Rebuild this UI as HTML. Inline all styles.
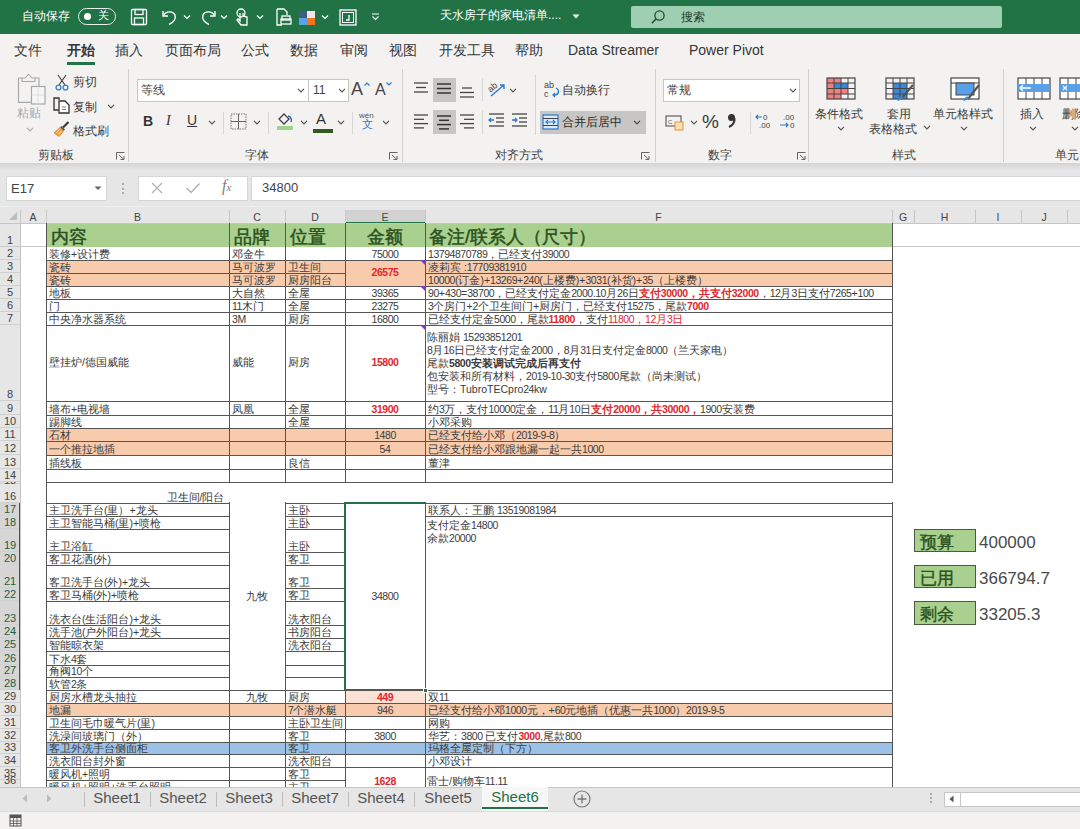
<!DOCTYPE html><html><head><meta charset="utf-8"><style>
*{box-sizing:border-box}
html,body{margin:0;padding:0;width:1080px;height:829px;overflow:hidden;background:#fff;font-family:"Liberation Sans",sans-serif;}
div{position:absolute}
.t{display:flex;white-space:nowrap;overflow:visible;line-height:1}
.s{position:absolute;white-space:nowrap;line-height:1}
svg{position:absolute;overflow:visible}
</style></head><body>
<div style="position:absolute;left:0px;top:0px;width:1080px;height:34px;background:#217346;"></div>
<div class="s" style="left:22px;top:10px;font-size:12px;color:#fff;font-weight:normal;">自动保存</div>
<div style="left:78px;top:8px;width:38px;height:17px;border:1.3px solid #e8f1ec;border-radius:9px"></div>
<div style="left:84px;top:13px;width:7px;height:7px;border-radius:50%;background:#fff"></div>
<div class="s" style="left:98px;top:10px;font-size:11px;color:#fff;font-weight:normal;">关</div>
<svg style="left:130px;top:8px" width="18" height="18" viewBox="0 0 18 18"><rect x="1.5" y="1.5" width="15" height="15" rx="1" fill="none" stroke="#fff" stroke-width="1.3"/><rect x="5" y="1.5" width="8" height="5" fill="none" stroke="#fff" stroke-width="1.3"/><rect x="4.5" y="10" width="9" height="6.5" fill="none" stroke="#fff" stroke-width="1.3"/></svg>
<svg style="left:160px;top:8px" width="20" height="18" viewBox="0 0 20 18"><path d="M3 3 L3 8 L8 8" fill="none" stroke="#fff" stroke-width="1.4"/><path d="M3.5 7.5 C6 3 13 2.5 15 7 C16.5 11 13 15 9 16.5" fill="none" stroke="#fff" stroke-width="1.4"/></svg>
<svg style="left:183px;top:14px" width="8" height="6" viewBox="0 0 8 6"><path d="M1 1.5 L4 4.5 L7 1.5" fill="none" stroke="#fff" stroke-width="1.2"/></svg>
<svg style="left:198px;top:8px" width="20" height="18" viewBox="0 0 20 18"><path d="M17 3 L17 8 L12 8" fill="none" stroke="#fff" stroke-width="1.4"/><path d="M16.5 7.5 C14 3 7 2.5 5 7 C3.5 11 7 15 11 16.5" fill="none" stroke="#fff" stroke-width="1.4"/></svg>
<svg style="left:220px;top:14px" width="8" height="6" viewBox="0 0 8 6"><path d="M1 1.5 L4 4.5 L7 1.5" fill="none" stroke="#fff" stroke-width="1.2"/></svg>
<svg style="left:234px;top:7px" width="16" height="20" viewBox="0 0 16 20"><circle cx="7" cy="6" r="4" fill="none" stroke="#fff" stroke-width="1.3"/><path d="M6 6 L6 14 L4 12 L3 13 L7 18 L13 18 L13 10 L9 9 L9 6" fill="none" stroke="#fff" stroke-width="1.3"/></svg>
<svg style="left:256px;top:14px" width="8" height="6" viewBox="0 0 8 6"><path d="M1 1.5 L4 4.5 L7 1.5" fill="none" stroke="#fff" stroke-width="1.2"/></svg>
<svg style="left:275px;top:7px" width="18" height="20" viewBox="0 0 18 20"><path d="M2 2 L9 2 L12 5 L12 8 M2 2 L2 18 L7 18" fill="none" stroke="#fff" stroke-width="1.3"/><rect x="7" y="9" width="8" height="4" fill="none" stroke="#fff" stroke-width="1.3"/><rect x="6" y="12" width="10" height="5" fill="none" stroke="#fff" stroke-width="1.3"/></svg>
<div style="left:299px;top:11px;width:8px;height:7px;background:#3f5d82"></div>
<div style="left:307px;top:11px;width:8px;height:7px;background:#f2e6ec"></div>
<div style="left:299px;top:18px;width:8px;height:7px;background:#5ba3e8"></div>
<div style="left:307px;top:18px;width:8px;height:7px;background:#f2761e"></div>
<svg style="left:321px;top:14px" width="8" height="6" viewBox="0 0 8 6"><path d="M1 1.5 L4 4.5 L7 1.5" fill="none" stroke="#fff" stroke-width="1.2"/></svg>
<svg style="left:339px;top:9px" width="18" height="17" viewBox="0 0 18 17"><rect x="1" y="1" width="16" height="15" fill="none" stroke="#fff" stroke-width="1.3"/><rect x="3.5" y="3.5" width="11" height="10" fill="none" stroke="#fff" stroke-width="1"/><path d="M10 6 L10 11 L7 11" fill="none" stroke="#fff" stroke-width="1.3"/></svg>
<svg style="left:371px;top:13px" width="9" height="8" viewBox="0 0 9 8"><path d="M1 1 L8 1 M1.5 3.5 L4.5 6.5 L7.5 3.5" fill="none" stroke="#fff" stroke-width="1.1"/></svg>
<div class="s" style="left:440px;top:9px;font-size:12px;color:#fff;font-weight:normal;">天水房子的家电清单....</div>
<svg style="left:572px;top:14px" width="8" height="5" viewBox="0 0 8 5"><path d="M0.5 0.5 L4 4.5 L7.5 0.5Z" fill="#fff"/></svg>
<div style="position:absolute;left:631px;top:6px;width:371px;height:22px;background:#9fcfb3;border-radius:2px"></div>
<svg style="left:650px;top:9px" width="16" height="16" viewBox="0 0 16 16"><circle cx="9.5" cy="6.5" r="4.6" fill="none" stroke="#1e4a30" stroke-width="1.3"/><path d="M6.3 9.7 L1.8 14.2" stroke="#1e4a30" stroke-width="1.5"/></svg>
<div class="s" style="left:681px;top:11px;font-size:12px;color:#1d3b2a;font-weight:normal;">搜索</div>
<div style="position:absolute;left:0px;top:34px;width:1080px;height:131px;background:#f3f2f1;"></div>
<div class="s" style="left:14px;top:43px;font-size:14px;color:#363636;font-weight:normal;">文件</div>
<div class="s" style="left:67px;top:43px;font-size:14px;color:#363636;font-weight:bold;">开始</div>
<div class="s" style="left:115px;top:43px;font-size:14px;color:#363636;font-weight:normal;">插入</div>
<div class="s" style="left:165px;top:43px;font-size:14px;color:#363636;font-weight:normal;">页面布局</div>
<div class="s" style="left:241px;top:43px;font-size:14px;color:#363636;font-weight:normal;">公式</div>
<div class="s" style="left:290px;top:43px;font-size:14px;color:#363636;font-weight:normal;">数据</div>
<div class="s" style="left:340px;top:43px;font-size:14px;color:#363636;font-weight:normal;">审阅</div>
<div class="s" style="left:389px;top:43px;font-size:14px;color:#363636;font-weight:normal;">视图</div>
<div class="s" style="left:439px;top:43px;font-size:14px;color:#363636;font-weight:normal;">开发工具</div>
<div class="s" style="left:515px;top:43px;font-size:14px;color:#363636;font-weight:normal;">帮助</div>
<div class="s" style="left:568px;top:43px;font-size:14px;color:#363636;font-weight:normal;">Data Streamer</div>
<div class="s" style="left:689px;top:43px;font-size:14px;color:#363636;font-weight:normal;">Power Pivot</div>
<div style="position:absolute;left:67px;top:62px;width:28px;height:3px;background:#217346;"></div>
<div style="position:absolute;left:128px;top:69px;width:1px;height:93px;background:#d2d0ce;"></div>
<div style="position:absolute;left:402px;top:69px;width:1px;height:93px;background:#d2d0ce;"></div>
<div style="position:absolute;left:655px;top:69px;width:1px;height:93px;background:#d2d0ce;"></div>
<div style="position:absolute;left:808px;top:69px;width:1px;height:93px;background:#d2d0ce;"></div>
<div style="position:absolute;left:1003px;top:69px;width:1px;height:93px;background:#d2d0ce;"></div>
<div class="s" style="left:38px;top:149px;font-size:12px;color:#444;font-weight:normal;">剪贴板</div>
<div class="s" style="left:245px;top:149px;font-size:12px;color:#444;font-weight:normal;">字体</div>
<div class="s" style="left:495px;top:149px;font-size:12px;color:#444;font-weight:normal;">对齐方式</div>
<div class="s" style="left:708px;top:149px;font-size:12px;color:#444;font-weight:normal;">数字</div>
<div class="s" style="left:892px;top:149px;font-size:12px;color:#444;font-weight:normal;">样式</div>
<div class="s" style="left:1055px;top:149px;font-size:12px;color:#444;font-weight:normal;">单元</div>
<svg style="left:116px;top:152px" width="9" height="8" viewBox="0 0 9 8"><path d="M0.5 7.5 L0.5 0.5 L8.5 0.5" fill="none" stroke="#666" stroke-width="1"/><path d="M3 3 L8 7.5 M8 4 L8 7.5 L4.5 7.5" fill="none" stroke="#666" stroke-width="1"/></svg>
<svg style="left:389px;top:152px" width="9" height="8" viewBox="0 0 9 8"><path d="M0.5 7.5 L0.5 0.5 L8.5 0.5" fill="none" stroke="#666" stroke-width="1"/><path d="M3 3 L8 7.5 M8 4 L8 7.5 L4.5 7.5" fill="none" stroke="#666" stroke-width="1"/></svg>
<svg style="left:641px;top:152px" width="9" height="8" viewBox="0 0 9 8"><path d="M0.5 7.5 L0.5 0.5 L8.5 0.5" fill="none" stroke="#666" stroke-width="1"/><path d="M3 3 L8 7.5 M8 4 L8 7.5 L4.5 7.5" fill="none" stroke="#666" stroke-width="1"/></svg>
<svg style="left:797px;top:152px" width="9" height="8" viewBox="0 0 9 8"><path d="M0.5 7.5 L0.5 0.5 L8.5 0.5" fill="none" stroke="#666" stroke-width="1"/><path d="M3 3 L8 7.5 M8 4 L8 7.5 L4.5 7.5" fill="none" stroke="#666" stroke-width="1"/></svg>
<svg style="left:17px;top:73px" width="30" height="33" viewBox="0 0 30 33"><path d="M14 29.3 L1.5 29.3 L1.5 5 L5 5 M18 5 L22 5 L22 13" fill="none" stroke="#a8a8a8" stroke-width="1.2"/><path d="M5 5 L5 8.5 L18 8.5 L18 5 L15 5 L11.5 1.2 L8 5 Z" fill="#f3f2f1" stroke="#a8a8a8" stroke-width="1.1"/><rect x="14.5" y="13.5" width="13.5" height="17.5" fill="#f6f6f6" stroke="#a8a8a8" stroke-width="1.2"/><path d="M21 13.5 L21 31 M14.5 22 L28 22" stroke="#d4d4d4" stroke-width="0.7"/></svg>
<div class="s" style="left:17px;top:107px;font-size:12px;color:#a8a8a8;font-weight:normal;">粘贴</div>
<svg style="left:26px;top:127px" width="8" height="5" viewBox="0 0 8 5"><path d="M1 0.8 L4 3.8 L7 0.8" fill="none" stroke="#aaa" stroke-width="1.2"/></svg>
<svg style="left:55px;top:74px" width="14" height="17" viewBox="0 0 14 17"><path d="M3 1 L10 11 M11 1 L4 11" stroke="#444" stroke-width="1.2"/><circle cx="3.5" cy="13.5" r="2.4" fill="none" stroke="#3a86c8" stroke-width="1.4"/><circle cx="10.5" cy="13.5" r="2.4" fill="none" stroke="#3a86c8" stroke-width="1.4"/></svg>
<div class="s" style="left:73px;top:76px;font-size:12px;color:#3a3a3a;font-weight:normal;">剪切</div>
<svg style="left:53px;top:97px" width="17" height="17" viewBox="0 0 17 17"><path d="M6 3 L6 1 L1 1 L1 13 L6 13" fill="none" stroke="#333" stroke-width="1.3"/><path d="M6 4 L12 4 L16 8 L16 16 L6 16 Z" fill="#fff" stroke="#333" stroke-width="1.3"/><path d="M9 10 L13 10 M9 12.5 L13 12.5" stroke="#777" stroke-width="0.9"/></svg>
<div class="s" style="left:73px;top:101px;font-size:12px;color:#3a3a3a;font-weight:normal;">复制</div>
<svg style="left:107px;top:104px" width="8" height="5" viewBox="0 0 8 5"><path d="M1 0.8 L4 3.8 L7 0.8" fill="none" stroke="#555" stroke-width="1.2"/></svg>
<svg style="left:53px;top:121px" width="17" height="17" viewBox="0 0 17 17"><path d="M15.5 1 L10 6.5" stroke="#3a3a3a" stroke-width="2.2"/><path d="M8.5 5 L12 8.5 L10.5 10 L7 6.5 Z" fill="#555" /><path d="M7 6.5 L10.5 10 L6 15.5 L1 12 Z" fill="#f2a23c" stroke="#d9822b" stroke-width="0.8"/><path d="M3.5 11.5 L6.5 8.5 M5.5 13 L8.5 10" stroke="#fde3c0" stroke-width="0.8"/></svg>
<div class="s" style="left:73px;top:125px;font-size:12px;color:#3a3a3a;font-weight:normal;">格式刷</div>
<div style="position:absolute;left:137px;top:79px;width:172px;height:23px;background:#fff;border:1px solid #c8c6c4"></div>
<div class="s" style="left:141px;top:84px;font-size:12px;color:#444;font-weight:normal;">等线</div>
<svg style="left:297px;top:88px" width="8" height="5" viewBox="0 0 8 5"><path d="M1 0.8 L4 3.8 L7 0.8" fill="none" stroke="#555" stroke-width="1.2"/></svg>
<div style="position:absolute;left:308px;top:79px;width:41px;height:23px;background:#fff;border:1px solid #c8c6c4"></div>
<div class="s" style="left:313px;top:84px;font-size:12px;color:#444;font-weight:normal;">11</div>
<svg style="left:338px;top:88px" width="8" height="5" viewBox="0 0 8 5"><path d="M1 0.8 L4 3.8 L7 0.8" fill="none" stroke="#555" stroke-width="1.2"/></svg>
<div class="s" style="left:351px;top:80px;font-size:18px;color:#444;font-weight:normal;">A</div>
<svg style="left:364px;top:82px" width="6" height="4" viewBox="0 0 6 4"><path d="M0.5 3.5 L3 1 L5.5 3.5" fill="none" stroke="#2b79d0" stroke-width="1.2"/></svg>
<div class="s" style="left:375px;top:82px;font-size:16px;color:#444;font-weight:normal;">A</div>
<svg style="left:386px;top:82px" width="6" height="4" viewBox="0 0 6 4"><path d="M0.5 0.5 L3 3 L5.5 0.5" fill="none" stroke="#2b79d0" stroke-width="1.2"/></svg>
<div class="s" style="left:143px;top:114px;font-size:14px;color:#333;font-weight:bold;">B</div>
<div class="s" style="left:166px;top:114px;font-size:14px;color:#333;font-weight:normal;font-style:italic;font-family:'Liberation Serif',serif">I</div>
<div class="s" style="left:187px;top:113px;font-size:14px;color:#333;text-decoration:underline">U</div>
<svg style="left:208px;top:120px" width="8" height="5" viewBox="0 0 8 5"><path d="M1 0.8 L4 3.8 L7 0.8" fill="none" stroke="#555" stroke-width="1.2"/></svg>
<div style="position:absolute;left:223px;top:112px;width:1px;height:22px;background:#d8d6d4;"></div>
<svg style="left:230px;top:113px" width="17" height="17" viewBox="0 0 17 17"><rect x="1" y="1" width="15" height="15" fill="none" stroke="#777" stroke-width="1" stroke-dasharray="1.5 1"/><path d="M8.5 1 L8.5 16 M1 8.5 L16 8.5" stroke="#666" stroke-width="1"/></svg>
<svg style="left:253px;top:120px" width="8" height="5" viewBox="0 0 8 5"><path d="M1 0.8 L4 3.8 L7 0.8" fill="none" stroke="#555" stroke-width="1.2"/></svg>
<div style="position:absolute;left:268px;top:112px;width:1px;height:22px;background:#d8d6d4;"></div>
<svg style="left:276px;top:111px" width="18" height="20" viewBox="0 0 18 20"><path d="M3 8 L8 3 L13 8 L8 13 Z" fill="none" stroke="#444" stroke-width="1.3"/><path d="M12 5 C15 5 16 9 15 11" fill="none" stroke="#2b6cb0" stroke-width="1.5"/><rect x="1" y="15" width="16" height="4" fill="#9fd58a"/></svg>
<svg style="left:300px;top:120px" width="8" height="5" viewBox="0 0 8 5"><path d="M1 0.8 L4 3.8 L7 0.8" fill="none" stroke="#555" stroke-width="1.2"/></svg>
<div class="s" style="left:316px;top:111px;font-size:15px;color:#333;font-weight:normal;">A</div>
<div style="position:absolute;left:313px;top:129px;width:20px;height:4px;background:#2f5a22;"></div>
<svg style="left:337px;top:120px" width="8" height="5" viewBox="0 0 8 5"><path d="M1 0.8 L4 3.8 L7 0.8" fill="none" stroke="#555" stroke-width="1.2"/></svg>
<div style="position:absolute;left:352px;top:112px;width:1px;height:22px;background:#d8d6d4;"></div>
<div class="s" style="left:359px;top:112px;font-size:8px;color:#555;font-weight:normal;">wén</div>
<div class="s" style="left:362px;top:119px;font-size:11px;color:#2b79d0;font-weight:normal;">文</div>
<svg style="left:382px;top:120px" width="8" height="5" viewBox="0 0 8 5"><path d="M1 0.8 L4 3.8 L7 0.8" fill="none" stroke="#555" stroke-width="1.2"/></svg>
<div style="position:absolute;left:433px;top:78px;width:23px;height:24px;background:#c8c6c4;"></div>
<div style="position:absolute;left:433px;top:110px;width:23px;height:24px;background:#c8c6c4;"></div>
<svg style="left:413px;top:81px" width="16" height="14" viewBox="0 0 16 14"><path d="M1 2.0 L15 2.0" stroke="#444" stroke-width="1.3"/><path d="M3 6.5 L13 6.5" stroke="#444" stroke-width="1.3"/><path d="M1 11.0 L15 11.0" stroke="#444" stroke-width="1.3"/></svg>
<svg style="left:436px;top:82px" width="16" height="14" viewBox="0 0 16 14"><path d="M1 2.0 L15 2.0" stroke="#333" stroke-width="1.5"/><path d="M1 6.5 L15 6.5" stroke="#333" stroke-width="1.5"/><path d="M1 11.0 L15 11.0" stroke="#333" stroke-width="1.5"/></svg>
<svg style="left:459px;top:86px" width="16" height="14" viewBox="0 0 16 14"><path d="M3 2.0 L13 2.0" stroke="#444" stroke-width="1.3"/><path d="M1 6.5 L15 6.5" stroke="#444" stroke-width="1.3"/><path d="M1 11.0 L15 11.0" stroke="#444" stroke-width="1.3"/></svg>
<div style="position:absolute;left:482px;top:78px;width:1px;height:23px;background:#d8d6d4;"></div>
<svg style="left:487px;top:80px" width="20" height="18" viewBox="0 0 20 18"><text x="1" y="10" font-size="9" fill="#444" transform="rotate(-40 6 8)" font-family="Liberation Sans">ab</text><path d="M4 16 L17 5 M13 5 L17 5 L17 9" fill="none" stroke="#2b79d0" stroke-width="1.4"/></svg>
<svg style="left:509px;top:88px" width="8" height="5" viewBox="0 0 8 5"><path d="M1 0.8 L4 3.8 L7 0.8" fill="none" stroke="#555" stroke-width="1.2"/></svg>
<div style="position:absolute;left:535px;top:75px;width:1px;height:60px;background:#d8d6d4;"></div>
<svg style="left:543px;top:80px" width="17" height="18" viewBox="0 0 17 18"><text x="1" y="8" font-size="9" fill="#444" font-family="Liberation Sans">ab</text><text x="1" y="17" font-size="9" fill="#444" font-family="Liberation Sans">c</text><path d="M13 8 C17 10 16 15 11 15 M12 13 L10 15 L12 17" fill="none" stroke="#2b79d0" stroke-width="1.3"/></svg>
<div class="s" style="left:562px;top:84px;font-size:12px;color:#3a3a3a;font-weight:normal;">自动换行</div>
<svg style="left:413px;top:113px" width="16" height="16" viewBox="0 0 16 16"><path d="M1 2.0 L15 2.0" stroke="#444" stroke-width="1.3"/><path d="M1 6.3 L11 6.3" stroke="#444" stroke-width="1.3"/><path d="M1 10.6 L15 10.6" stroke="#444" stroke-width="1.3"/><path d="M1 14.899999999999999 L11 14.899999999999999" stroke="#444" stroke-width="1.3"/></svg>
<svg style="left:436px;top:114px" width="16" height="16" viewBox="0 0 16 16"><path d="M1 2.0 L15 2.0" stroke="#333" stroke-width="1.5"/><path d="M3 6.3 L13 6.3" stroke="#333" stroke-width="1.5"/><path d="M1 10.6 L15 10.6" stroke="#333" stroke-width="1.5"/><path d="M3 14.899999999999999 L13 14.899999999999999" stroke="#333" stroke-width="1.5"/></svg>
<svg style="left:459px;top:113px" width="16" height="16" viewBox="0 0 16 16"><path d="M1 2.0 L15 2.0" stroke="#444" stroke-width="1.3"/><path d="M5 6.3 L15 6.3" stroke="#444" stroke-width="1.3"/><path d="M1 10.6 L15 10.6" stroke="#444" stroke-width="1.3"/><path d="M5 14.899999999999999 L15 14.899999999999999" stroke="#444" stroke-width="1.3"/></svg>
<div style="position:absolute;left:482px;top:110px;width:1px;height:24px;background:#d8d6d4;"></div>
<svg style="left:488px;top:112px" width="17" height="16" viewBox="0 0 17 16"><path d="M1 2 L16 2" stroke="#444" stroke-width="1.3"/><path d="M8 6 L16 6" stroke="#444" stroke-width="1.3"/><path d="M8 10 L16 10" stroke="#444" stroke-width="1.3"/><path d="M1 14 L16 14" stroke="#444" stroke-width="1.3"/><path d="M1 8 L6 8 M3 6 L1 8 L3 10" fill="none" stroke="#2b79d0" stroke-width="1.3"/></svg>
<svg style="left:511px;top:112px" width="17" height="16" viewBox="0 0 17 16"><path d="M1 2 L16 2" stroke="#444" stroke-width="1.3"/><path d="M8 6 L16 6" stroke="#444" stroke-width="1.3"/><path d="M8 10 L16 10" stroke="#444" stroke-width="1.3"/><path d="M1 14 L16 14" stroke="#444" stroke-width="1.3"/><path d="M1 8 L6 8 M4 6 L6 8 L4 10" fill="none" stroke="#2b79d0" stroke-width="1.3"/></svg>
<div style="position:absolute;left:540px;top:111px;width:106px;height:23px;background:#c8c6c4;"></div>
<svg style="left:542px;top:114px" width="17" height="16" viewBox="0 0 17 16"><rect x="1" y="1" width="15" height="14" fill="#dbeaf7" stroke="#2b79d0" stroke-width="1.2"/><path d="M1 4.5 L16 4.5 M1 11.5 L16 11.5" stroke="#444" stroke-width="1"/><path d="M4 8 L13 8 M6 6 L4 8 L6 10 M11 6 L13 8 L11 10" fill="none" stroke="#2b79d0" stroke-width="1.1"/></svg>
<div class="s" style="left:562px;top:116px;font-size:12px;color:#2a2a2a;font-weight:normal;">合并后居中</div>
<svg style="left:633px;top:120px" width="8" height="5" viewBox="0 0 8 5"><path d="M1 0.8 L4 3.8 L7 0.8" fill="none" stroke="#444" stroke-width="1.2"/></svg>
<div style="position:absolute;left:663px;top:79px;width:137px;height:23px;background:#fff;border:1px solid #c8c6c4"></div>
<div class="s" style="left:667px;top:84px;font-size:12px;color:#444;font-weight:normal;">常规</div>
<svg style="left:789px;top:88px" width="8" height="5" viewBox="0 0 8 5"><path d="M1 0.8 L4 3.8 L7 0.8" fill="none" stroke="#555" stroke-width="1.2"/></svg>
<svg style="left:665px;top:114px" width="20" height="17" viewBox="0 0 20 17"><rect x="1" y="2" width="15" height="10" fill="none" stroke="#555" stroke-width="1.1"/><text x="3" y="10" font-size="6" fill="#555" font-family="Liberation Sans">C</text><rect x="10" y="8" width="8" height="8" fill="#fbe0b8" stroke="#e8912b" stroke-width="1"/></svg>
<svg style="left:690px;top:120px" width="8" height="5" viewBox="0 0 8 5"><path d="M1 0.8 L4 3.8 L7 0.8" fill="none" stroke="#555" stroke-width="1.2"/></svg>
<div class="s" style="left:702px;top:112px;font-size:19px;color:#3a3a3a;font-weight:normal;">%</div>
<div class="s" style="left:727px;top:109px;font-size:0px;color:#333;font-weight:normal;">❟</div>
<svg style="left:727px;top:113px" width="9" height="15" viewBox="0 0 9 15"><circle cx="4.5" cy="4.5" r="3.5" fill="#333"/><path d="M7.5 5 C8 9 6 12 2 14" fill="none" stroke="#333" stroke-width="2"/></svg>
<div style="position:absolute;left:750px;top:112px;width:1px;height:22px;background:#d8d6d4;"></div>
<svg style="left:755px;top:113px" width="18" height="17" viewBox="0 0 18 17"><text x="8" y="7" font-size="8" fill="#444" font-family="Liberation Sans">0</text><text x="4" y="15" font-size="8" fill="#444" font-family="Liberation Sans">.00</text><path d="M1 4 L7 4 M3 2 L1 4 L3 6" fill="none" stroke="#2b79d0" stroke-width="1.2"/></svg>
<svg style="left:779px;top:113px" width="18" height="17" viewBox="0 0 18 17"><text x="4" y="7" font-size="8" fill="#444" font-family="Liberation Sans">.00</text><text x="11" y="15" font-size="8" fill="#444" font-family="Liberation Sans">0</text><path d="M1 12 L9 12 M7 10 L9 12 L7 14" fill="none" stroke="#2b79d0" stroke-width="1.2"/></svg>
<svg style="left:826px;top:77px" width="30" height="24" viewBox="0 0 30 24"><rect x="1" y="1" width="14" height="5" fill="#f08080"/><rect x="1" y="6" width="7" height="5.5" fill="#f08080"/><rect x="8" y="6" width="14" height="5.5" fill="#3a86d8"/><rect x="1" y="11.5" width="21" height="5.5" fill="#f08080"/><rect x="1" y="17" width="14" height="5" fill="#f08080"/><rect x="1" y="1" width="28" height="21" fill="none" stroke="#444" stroke-width="1.2"/><path d="M8 1 L8 22" stroke="#444" stroke-width="1"/><path d="M15 1 L15 22" stroke="#444" stroke-width="1"/><path d="M22 1 L22 22" stroke="#444" stroke-width="1"/><path d="M1 6 L29 6" stroke="#444" stroke-width="1"/><path d="M1 11.5 L29 11.5" stroke="#444" stroke-width="1"/><path d="M1 17 L29 17" stroke="#444" stroke-width="1"/></svg>
<svg style="left:885px;top:77px" width="30" height="24" viewBox="0 0 30 24"><rect x="8" y="6" width="14" height="16" fill="#3a86d8"/><rect x="1" y="1" width="28" height="21" fill="none" stroke="#444" stroke-width="1.2"/><path d="M8 1 L8 22" stroke="#444" stroke-width="1"/><path d="M15 1 L15 22" stroke="#444" stroke-width="1"/><path d="M22 1 L22 22" stroke="#444" stroke-width="1"/><path d="M1 6 L29 6" stroke="#444" stroke-width="1"/><path d="M1 11.5 L29 11.5" stroke="#444" stroke-width="1"/><path d="M1 17 L29 17" stroke="#444" stroke-width="1"/><path d="M16 22 L28 8" stroke="#555" stroke-width="2.2"/><path d="M13 24 C14 20 16 19 18 21" fill="#3a86d8" stroke="#3a86d8"/></svg>
<svg style="left:950px;top:77px" width="30" height="24" viewBox="0 0 30 24"><rect x="1" y="1" width="28" height="21" fill="#fff" stroke="#444" stroke-width="1.2"/><path d="M1 6 L29 6" stroke="#444"/><rect x="6" y="6" width="18" height="12" fill="#5aa0e8" stroke="#444" stroke-width="1"/><path d="M18 22 L29 8" stroke="#555" stroke-width="2.2"/><path d="M14 24 C15 20 17 19 19 21" fill="#3a86d8" stroke="#3a86d8"/></svg>
<div class="s" style="left:815px;top:108px;font-size:12px;color:#3a3a3a;font-weight:normal;">条件格式</div>
<svg style="left:837px;top:126px" width="8" height="5" viewBox="0 0 8 5"><path d="M1 0.8 L4 3.8 L7 0.8" fill="none" stroke="#555" stroke-width="1.2"/></svg>
<div class="s" style="left:887px;top:108px;font-size:12px;color:#3a3a3a;font-weight:normal;">套用</div>
<div class="s" style="left:869px;top:123px;font-size:12px;color:#3a3a3a;font-weight:normal;">表格格式</div>
<svg style="left:923px;top:125px" width="8" height="5" viewBox="0 0 8 5"><path d="M1 0.8 L4 3.8 L7 0.8" fill="none" stroke="#555" stroke-width="1.2"/></svg>
<div class="s" style="left:933px;top:108px;font-size:12px;color:#3a3a3a;font-weight:normal;">单元格样式</div>
<svg style="left:960px;top:126px" width="8" height="5" viewBox="0 0 8 5"><path d="M1 0.8 L4 3.8 L7 0.8" fill="none" stroke="#555" stroke-width="1.2"/></svg>
<svg style="left:1017px;top:77px" width="34" height="24" viewBox="0 0 34 24"><rect x="1" y="1" width="32" height="21" fill="#fff" stroke="#444" stroke-width="1.2"/><path d="M9 1 L9 22 M17 1 L17 22 M25 1 L25 22" stroke="#444"/><rect x="1" y="7" width="32" height="8" fill="#5aa0e8"/><path d="M3 11 L14 11 M6 8 L3 11 L6 14" fill="none" stroke="#fff" stroke-width="1.3"/></svg>
<svg style="left:1059px;top:77px" width="34" height="24" viewBox="0 0 34 24"><rect x="1" y="1" width="32" height="21" fill="#fff" stroke="#444" stroke-width="1.2"/><path d="M9 1 L9 22 M17 1 L17 22" stroke="#444"/><rect x="1" y="7" width="32" height="8" fill="#5aa0e8"/><path d="M4 9 L8 13 M8 9 L4 13" stroke="#fff" stroke-width="1.2"/></svg>
<div class="s" style="left:1020px;top:108px;font-size:12px;color:#3a3a3a;font-weight:normal;">插入</div>
<svg style="left:1029px;top:126px" width="8" height="5" viewBox="0 0 8 5"><path d="M1 0.8 L4 3.8 L7 0.8" fill="none" stroke="#555" stroke-width="1.2"/></svg>
<div class="s" style="left:1062px;top:108px;font-size:12px;color:#3a3a3a;font-weight:normal;">删除</div>
<svg style="left:1071px;top:126px" width="8" height="5" viewBox="0 0 8 5"><path d="M1 0.8 L4 3.8 L7 0.8" fill="none" stroke="#555" stroke-width="1.2"/></svg>
<div style="position:absolute;left:0px;top:164px;width:1080px;height:46px;background:#e6e6e6;"></div>
<div style="position:absolute;left:0px;top:163px;width:1080px;height:7px;background:linear-gradient(#d4d4d4,#e6e6e6);"></div>
<div style="position:absolute;left:0px;top:206px;width:1080px;height:1px;background:#f0f0f0;"></div>
<div style="position:absolute;left:6px;top:176px;width:101px;height:25px;background:#fff;border:1px solid #d6d6d6"></div>
<div class="s" style="left:11px;top:182px;font-size:13px;color:#444;font-weight:normal;">E17</div>
<svg style="left:94px;top:186px" width="8" height="5" viewBox="0 0 8 5"><path d="M0.5 0.5 L4 4 L7.5 0.5Z" fill="#666"/></svg>
<div style="left:121.5px;top:183px;width:2px;height:2px;background:#999;border-radius:1px"></div>
<div style="left:121.5px;top:187.5px;width:2px;height:2px;background:#999;border-radius:1px"></div>
<div style="left:121.5px;top:192px;width:2px;height:2px;background:#999;border-radius:1px"></div>
<div style="position:absolute;left:138px;top:176px;width:110px;height:25px;background:#fff;border:1px solid #d6d6d6"></div>
<svg style="left:150px;top:181px" width="14" height="14" viewBox="0 0 14 14"><path d="M2 2 L12 12 M12 2 L2 12" stroke="#b0b0b0" stroke-width="1.2"/></svg>
<svg style="left:185px;top:181px" width="16" height="14" viewBox="0 0 16 14"><path d="M1.5 7 L6 11.5 L14.5 2.5" fill="none" stroke="#b0b0b0" stroke-width="1.3"/></svg>
<div class="s" style="left:222px;top:178px;font-size:16px;color:#808080;font-weight:normal;font-family:'Liberation Serif',serif"><i>f</i><span style="font-size:11px"><i>x</i></span></div>
<div style="position:absolute;left:251px;top:176px;width:829px;height:25px;background:#fff;border:1px solid #d6d6d6;border-right:none"></div>
<div class="s" style="left:262px;top:181px;font-size:13px;color:#444;font-weight:normal;">34800</div>
<div style="position:absolute;left:0px;top:210px;width:1080px;height:14px;background:#e6e6e6;"></div>
<svg style="left:8px;top:211px" width="10" height="10" viewBox="0 0 10 10"><path d="M9 1 L9 9 L1 9 Z" fill="#bdbdbd"/></svg>
<div style="position:absolute;left:345px;top:210px;width:80px;height:14px;background:#d2d2d2;"></div>
<div style="position:absolute;left:345px;top:222px;width:80px;height:1.5px;background:#217346;"></div>
<div style="position:absolute;left:20px;top:210px;width:1px;height:14px;background:#c6c6c6;"></div>
<div class="t" style="left:20px;top:209px;width:26px;height:13px;justify-content:center;align-items:flex-end;font-size:10.5px;color:#444;font-weight:normal;"><span>A</span></div>
<div style="position:absolute;left:46px;top:210px;width:1px;height:14px;background:#c6c6c6;"></div>
<div class="t" style="left:46px;top:209px;width:183px;height:13px;justify-content:center;align-items:flex-end;font-size:10.5px;color:#444;font-weight:normal;"><span>B</span></div>
<div style="position:absolute;left:229px;top:210px;width:1px;height:14px;background:#c6c6c6;"></div>
<div class="t" style="left:229px;top:209px;width:56px;height:13px;justify-content:center;align-items:flex-end;font-size:10.5px;color:#444;font-weight:normal;"><span>C</span></div>
<div style="position:absolute;left:285px;top:210px;width:1px;height:14px;background:#c6c6c6;"></div>
<div class="t" style="left:285px;top:209px;width:60px;height:13px;justify-content:center;align-items:flex-end;font-size:10.5px;color:#444;font-weight:normal;"><span>D</span></div>
<div style="position:absolute;left:345px;top:210px;width:1px;height:14px;background:#c6c6c6;"></div>
<div class="t" style="left:345px;top:209px;width:80px;height:13px;justify-content:center;align-items:flex-end;font-size:10.5px;color:#1e5e3a;font-weight:normal;"><span>E</span></div>
<div style="position:absolute;left:425px;top:210px;width:1px;height:14px;background:#c6c6c6;"></div>
<div class="t" style="left:425px;top:209px;width:467px;height:13px;justify-content:center;align-items:flex-end;font-size:10.5px;color:#444;font-weight:normal;"><span>F</span></div>
<div style="position:absolute;left:892px;top:210px;width:1px;height:14px;background:#c6c6c6;"></div>
<div class="t" style="left:892px;top:209px;width:22px;height:13px;justify-content:center;align-items:flex-end;font-size:10.5px;color:#444;font-weight:normal;"><span>G</span></div>
<div style="position:absolute;left:914px;top:210px;width:1px;height:14px;background:#c6c6c6;"></div>
<div class="t" style="left:914px;top:209px;width:61px;height:13px;justify-content:center;align-items:flex-end;font-size:10.5px;color:#444;font-weight:normal;"><span>H</span></div>
<div style="position:absolute;left:975px;top:210px;width:1px;height:14px;background:#c6c6c6;"></div>
<div class="t" style="left:975px;top:209px;width:46px;height:13px;justify-content:center;align-items:flex-end;font-size:10.5px;color:#444;font-weight:normal;"><span>I</span></div>
<div style="position:absolute;left:1021px;top:210px;width:1px;height:14px;background:#c6c6c6;"></div>
<div class="t" style="left:1021px;top:209px;width:46px;height:13px;justify-content:center;align-items:flex-end;font-size:10.5px;color:#444;font-weight:normal;"><span>J</span></div>
<div style="position:absolute;left:1067px;top:210px;width:1px;height:14px;background:#c6c6c6;"></div>
<div class="t" style="left:1067px;top:209px;width:46px;height:13px;justify-content:center;align-items:flex-end;font-size:10.5px;color:#444;font-weight:normal;"><span>K</span></div>
<div style="position:absolute;left:20px;top:210px;width:1px;height:14px;background:#c6c6c6;"></div>
<div style="position:absolute;left:0px;top:223px;width:1080px;height:1px;background:#c6c6c6;"></div>
<div style="position:absolute;left:0px;top:224px;width:20px;height:563px;background:#e6e6e6;"></div>
<div style="position:absolute;left:0px;top:503px;width:20px;height:187px;background:#d6d6d6;"></div>
<div style="position:absolute;left:0px;top:246px;width:20px;height:1px;background:#d0d0d0;"></div>
<div class="t" style="left:0px;top:224px;width:20px;height:22px;justify-content:center;align-items:flex-end;font-size:11px;color:#444;font-weight:normal;"><span>1</span></div>
<div style="position:absolute;left:0px;top:259px;width:20px;height:1px;background:#d0d0d0;"></div>
<div class="t" style="left:0px;top:247px;width:20px;height:12px;justify-content:center;align-items:flex-end;font-size:11px;color:#444;font-weight:normal;"><span>2</span></div>
<div style="position:absolute;left:0px;top:272px;width:20px;height:1px;background:#d0d0d0;"></div>
<div class="t" style="left:0px;top:260px;width:20px;height:12px;justify-content:center;align-items:flex-end;font-size:11px;color:#444;font-weight:normal;"><span>3</span></div>
<div style="position:absolute;left:0px;top:285px;width:20px;height:1px;background:#d0d0d0;"></div>
<div class="t" style="left:0px;top:273px;width:20px;height:12px;justify-content:center;align-items:flex-end;font-size:11px;color:#444;font-weight:normal;"><span>4</span></div>
<div style="position:absolute;left:0px;top:298px;width:20px;height:1px;background:#d0d0d0;"></div>
<div class="t" style="left:0px;top:286px;width:20px;height:12px;justify-content:center;align-items:flex-end;font-size:11px;color:#444;font-weight:normal;"><span>5</span></div>
<div style="position:absolute;left:0px;top:311px;width:20px;height:1px;background:#d0d0d0;"></div>
<div class="t" style="left:0px;top:299px;width:20px;height:12px;justify-content:center;align-items:flex-end;font-size:11px;color:#444;font-weight:normal;"><span>6</span></div>
<div style="position:absolute;left:0px;top:324px;width:20px;height:1px;background:#d0d0d0;"></div>
<div class="t" style="left:0px;top:312px;width:20px;height:12px;justify-content:center;align-items:flex-end;font-size:11px;color:#444;font-weight:normal;"><span>7</span></div>
<div style="position:absolute;left:0px;top:400px;width:20px;height:1px;background:#d0d0d0;"></div>
<div class="t" style="left:0px;top:325px;width:20px;height:75px;justify-content:center;align-items:flex-end;font-size:11px;color:#444;font-weight:normal;"><span>8</span></div>
<div style="position:absolute;left:0px;top:414px;width:20px;height:1px;background:#d0d0d0;"></div>
<div class="t" style="left:0px;top:401px;width:20px;height:13px;justify-content:center;align-items:flex-end;font-size:11px;color:#444;font-weight:normal;"><span>9</span></div>
<div style="position:absolute;left:0px;top:427px;width:20px;height:1px;background:#d0d0d0;"></div>
<div class="t" style="left:0px;top:415px;width:20px;height:12px;justify-content:center;align-items:flex-end;font-size:11px;color:#444;font-weight:normal;"><span>10</span></div>
<div style="position:absolute;left:0px;top:440px;width:20px;height:1px;background:#d0d0d0;"></div>
<div class="t" style="left:0px;top:428px;width:20px;height:12px;justify-content:center;align-items:flex-end;font-size:11px;color:#444;font-weight:normal;"><span>11</span></div>
<div style="position:absolute;left:0px;top:454px;width:20px;height:1px;background:#d0d0d0;"></div>
<div class="t" style="left:0px;top:441px;width:20px;height:13px;justify-content:center;align-items:flex-end;font-size:11px;color:#444;font-weight:normal;"><span>12</span></div>
<div style="position:absolute;left:0px;top:468px;width:20px;height:1px;background:#d0d0d0;"></div>
<div class="t" style="left:0px;top:455px;width:20px;height:13px;justify-content:center;align-items:flex-end;font-size:11px;color:#444;font-weight:normal;"><span>13</span></div>
<div style="position:absolute;left:0px;top:481px;width:20px;height:1px;background:#d0d0d0;"></div>
<div class="t" style="left:0px;top:469px;width:20px;height:12px;justify-content:center;align-items:flex-end;font-size:11px;color:#444;font-weight:normal;"><span>14</span></div>
<div style="position:absolute;left:0px;top:483px;width:20px;height:1px;background:#d0d0d0;"></div>
<div style="left:0;top:482px;width:20px;height:2px;overflow:hidden"><div class="t" style="left:0;top:-6px;width:20px;height:10px;justify-content:center;align-items:flex-end;font-size:11px;color:#444">15</div></div>
<div style="position:absolute;left:0px;top:502px;width:20px;height:1px;background:#d0d0d0;"></div>
<div class="t" style="left:0px;top:484px;width:20px;height:18px;justify-content:center;align-items:flex-end;font-size:11px;color:#444;font-weight:normal;"><span>16</span></div>
<div style="position:absolute;left:0px;top:515px;width:20px;height:1px;background:#d0d0d0;"></div>
<div class="t" style="left:0px;top:503px;width:20px;height:12px;justify-content:center;align-items:flex-end;font-size:11px;color:#1e5e3a;font-weight:normal;"><span>17</span></div>
<div style="position:absolute;left:0px;top:528px;width:20px;height:1px;background:#d0d0d0;"></div>
<div class="t" style="left:0px;top:516px;width:20px;height:12px;justify-content:center;align-items:flex-end;font-size:11px;color:#1e5e3a;font-weight:normal;"><span>18</span></div>
<div style="position:absolute;left:0px;top:551px;width:20px;height:1px;background:#d0d0d0;"></div>
<div class="t" style="left:0px;top:529px;width:20px;height:22px;justify-content:center;align-items:flex-end;font-size:11px;color:#1e5e3a;font-weight:normal;"><span>19</span></div>
<div style="position:absolute;left:0px;top:564px;width:20px;height:1px;background:#d0d0d0;"></div>
<div class="t" style="left:0px;top:552px;width:20px;height:12px;justify-content:center;align-items:flex-end;font-size:11px;color:#1e5e3a;font-weight:normal;"><span>20</span></div>
<div style="position:absolute;left:0px;top:587px;width:20px;height:1px;background:#d0d0d0;"></div>
<div class="t" style="left:0px;top:565px;width:20px;height:22px;justify-content:center;align-items:flex-end;font-size:11px;color:#1e5e3a;font-weight:normal;"><span>21</span></div>
<div style="position:absolute;left:0px;top:600px;width:20px;height:1px;background:#d0d0d0;"></div>
<div class="t" style="left:0px;top:588px;width:20px;height:12px;justify-content:center;align-items:flex-end;font-size:11px;color:#1e5e3a;font-weight:normal;"><span>22</span></div>
<div style="position:absolute;left:0px;top:624px;width:20px;height:1px;background:#d0d0d0;"></div>
<div class="t" style="left:0px;top:601px;width:20px;height:23px;justify-content:center;align-items:flex-end;font-size:11px;color:#1e5e3a;font-weight:normal;"><span>23</span></div>
<div style="position:absolute;left:0px;top:637px;width:20px;height:1px;background:#d0d0d0;"></div>
<div class="t" style="left:0px;top:625px;width:20px;height:12px;justify-content:center;align-items:flex-end;font-size:11px;color:#1e5e3a;font-weight:normal;"><span>24</span></div>
<div style="position:absolute;left:0px;top:650px;width:20px;height:1px;background:#d0d0d0;"></div>
<div class="t" style="left:0px;top:638px;width:20px;height:12px;justify-content:center;align-items:flex-end;font-size:11px;color:#1e5e3a;font-weight:normal;"><span>25</span></div>
<div style="position:absolute;left:0px;top:664px;width:20px;height:1px;background:#d0d0d0;"></div>
<div class="t" style="left:0px;top:651px;width:20px;height:13px;justify-content:center;align-items:flex-end;font-size:11px;color:#1e5e3a;font-weight:normal;"><span>26</span></div>
<div style="position:absolute;left:0px;top:676px;width:20px;height:1px;background:#d0d0d0;"></div>
<div class="t" style="left:0px;top:665px;width:20px;height:11px;justify-content:center;align-items:flex-end;font-size:11px;color:#1e5e3a;font-weight:normal;"><span>27</span></div>
<div style="position:absolute;left:0px;top:689px;width:20px;height:1px;background:#d0d0d0;"></div>
<div class="t" style="left:0px;top:677px;width:20px;height:12px;justify-content:center;align-items:flex-end;font-size:11px;color:#1e5e3a;font-weight:normal;"><span>28</span></div>
<div style="position:absolute;left:0px;top:702px;width:20px;height:1px;background:#d0d0d0;"></div>
<div class="t" style="left:0px;top:690px;width:20px;height:12px;justify-content:center;align-items:flex-end;font-size:11px;color:#444;font-weight:normal;"><span>29</span></div>
<div style="position:absolute;left:0px;top:715px;width:20px;height:1px;background:#d0d0d0;"></div>
<div class="t" style="left:0px;top:703px;width:20px;height:12px;justify-content:center;align-items:flex-end;font-size:11px;color:#444;font-weight:normal;"><span>30</span></div>
<div style="position:absolute;left:0px;top:728px;width:20px;height:1px;background:#d0d0d0;"></div>
<div class="t" style="left:0px;top:716px;width:20px;height:12px;justify-content:center;align-items:flex-end;font-size:11px;color:#444;font-weight:normal;"><span>31</span></div>
<div style="position:absolute;left:0px;top:741px;width:20px;height:1px;background:#d0d0d0;"></div>
<div class="t" style="left:0px;top:729px;width:20px;height:12px;justify-content:center;align-items:flex-end;font-size:11px;color:#444;font-weight:normal;"><span>32</span></div>
<div style="position:absolute;left:0px;top:753px;width:20px;height:1px;background:#d0d0d0;"></div>
<div class="t" style="left:0px;top:742px;width:20px;height:11px;justify-content:center;align-items:flex-end;font-size:11px;color:#444;font-weight:normal;"><span>33</span></div>
<div style="position:absolute;left:0px;top:766px;width:20px;height:1px;background:#d0d0d0;"></div>
<div class="t" style="left:0px;top:754px;width:20px;height:12px;justify-content:center;align-items:flex-end;font-size:11px;color:#444;font-weight:normal;"><span>34</span></div>
<div style="position:absolute;left:0px;top:779px;width:20px;height:1px;background:#d0d0d0;"></div>
<div class="t" style="left:0px;top:767px;width:20px;height:12px;justify-content:center;align-items:flex-end;font-size:11px;color:#444;font-weight:normal;"><span>35</span></div>
<div class="t" style="left:0px;top:780px;width:20px;height:6px;justify-content:center;align-items:flex-end;font-size:11px;color:#444;font-weight:normal;"><span>36</span></div>
<div style="position:absolute;left:19px;top:503px;width:1.5px;height:187px;background:#1f6a40;"></div>
<div style="position:absolute;left:20px;top:224px;width:1px;height:563px;background:#c6c6c6;"></div>
<div style="position:absolute;left:0px;top:246px;width:1080px;height:1px;background:#c8c8c8;"></div>
<div style="position:absolute;left:46px;top:224px;width:846px;height:23px;background:#a9d08e;"></div>
<div style="position:absolute;left:46px;top:260px;width:846px;height:13px;background:#f8cbad;"></div>
<div style="position:absolute;left:46px;top:273px;width:846px;height:13px;background:#f8cbad;"></div>
<div style="position:absolute;left:46px;top:428px;width:846px;height:13px;background:#f8cbad;"></div>
<div style="position:absolute;left:46px;top:441px;width:846px;height:14px;background:#f8cbad;"></div>
<div style="position:absolute;left:46px;top:703px;width:846px;height:13px;background:#f8cbad;"></div>
<div style="position:absolute;left:46px;top:742px;width:846px;height:12px;background:#9bc2e6;"></div>
<div style="position:absolute;left:345px;top:690px;width:80px;height:13px;background:#fbe2d5;"></div>
<div style="position:absolute;left:46px;top:223px;width:1px;height:24px;background:#555555;"></div>
<div style="position:absolute;left:229px;top:223px;width:1px;height:24px;background:#555555;"></div>
<div style="position:absolute;left:285px;top:223px;width:1px;height:24px;background:#555555;"></div>
<div style="position:absolute;left:345px;top:223px;width:1px;height:24px;background:#555555;"></div>
<div style="position:absolute;left:425px;top:223px;width:1px;height:24px;background:#555555;"></div>
<div style="position:absolute;left:892px;top:223px;width:1px;height:24px;background:#555555;"></div>
<div style="position:absolute;left:46px;top:260px;width:847px;height:1px;background:#555555;"></div>
<div style="position:absolute;left:46px;top:273px;width:300px;height:1px;background:#555555;"></div>
<div style="position:absolute;left:425px;top:273px;width:468px;height:1px;background:#555555;"></div>
<div style="position:absolute;left:46px;top:286px;width:847px;height:1px;background:#555555;"></div>
<div style="position:absolute;left:46px;top:299px;width:847px;height:1px;background:#555555;"></div>
<div style="position:absolute;left:46px;top:312px;width:847px;height:1px;background:#555555;"></div>
<div style="position:absolute;left:46px;top:325px;width:847px;height:1px;background:#555555;"></div>
<div style="position:absolute;left:46px;top:401px;width:847px;height:1px;background:#555555;"></div>
<div style="position:absolute;left:46px;top:415px;width:847px;height:1px;background:#555555;"></div>
<div style="position:absolute;left:46px;top:428px;width:847px;height:1px;background:#555555;"></div>
<div style="position:absolute;left:46px;top:441px;width:847px;height:1px;background:#555555;"></div>
<div style="position:absolute;left:46px;top:455px;width:847px;height:1px;background:#555555;"></div>
<div style="position:absolute;left:46px;top:469px;width:847px;height:1px;background:#555555;"></div>
<div style="position:absolute;left:46px;top:482px;width:847px;height:1px;background:#555555;"></div>
<div style="position:absolute;left:46px;top:246px;width:1px;height:14px;background:#555555;"></div>
<div style="position:absolute;left:229px;top:246px;width:1px;height:14px;background:#555555;"></div>
<div style="position:absolute;left:285px;top:246px;width:1px;height:14px;background:#555555;"></div>
<div style="position:absolute;left:345px;top:246px;width:1px;height:14px;background:#555555;"></div>
<div style="position:absolute;left:425px;top:246px;width:1px;height:14px;background:#555555;"></div>
<div style="position:absolute;left:892px;top:246px;width:1px;height:14px;background:#555555;"></div>
<div style="position:absolute;left:46px;top:259px;width:1px;height:14px;background:#555555;"></div>
<div style="position:absolute;left:229px;top:259px;width:1px;height:14px;background:#555555;"></div>
<div style="position:absolute;left:285px;top:259px;width:1px;height:14px;background:#555555;"></div>
<div style="position:absolute;left:345px;top:259px;width:1px;height:14px;background:#555555;"></div>
<div style="position:absolute;left:425px;top:259px;width:1px;height:14px;background:#555555;"></div>
<div style="position:absolute;left:892px;top:259px;width:1px;height:14px;background:#555555;"></div>
<div style="position:absolute;left:46px;top:272px;width:1px;height:14px;background:#555555;"></div>
<div style="position:absolute;left:229px;top:272px;width:1px;height:14px;background:#555555;"></div>
<div style="position:absolute;left:285px;top:272px;width:1px;height:14px;background:#555555;"></div>
<div style="position:absolute;left:345px;top:272px;width:1px;height:14px;background:#555555;"></div>
<div style="position:absolute;left:425px;top:272px;width:1px;height:14px;background:#555555;"></div>
<div style="position:absolute;left:892px;top:272px;width:1px;height:14px;background:#555555;"></div>
<div style="position:absolute;left:46px;top:285px;width:1px;height:14px;background:#555555;"></div>
<div style="position:absolute;left:229px;top:285px;width:1px;height:14px;background:#555555;"></div>
<div style="position:absolute;left:285px;top:285px;width:1px;height:14px;background:#555555;"></div>
<div style="position:absolute;left:345px;top:285px;width:1px;height:14px;background:#555555;"></div>
<div style="position:absolute;left:425px;top:285px;width:1px;height:14px;background:#555555;"></div>
<div style="position:absolute;left:892px;top:285px;width:1px;height:14px;background:#555555;"></div>
<div style="position:absolute;left:46px;top:298px;width:1px;height:14px;background:#555555;"></div>
<div style="position:absolute;left:229px;top:298px;width:1px;height:14px;background:#555555;"></div>
<div style="position:absolute;left:285px;top:298px;width:1px;height:14px;background:#555555;"></div>
<div style="position:absolute;left:345px;top:298px;width:1px;height:14px;background:#555555;"></div>
<div style="position:absolute;left:425px;top:298px;width:1px;height:14px;background:#555555;"></div>
<div style="position:absolute;left:892px;top:298px;width:1px;height:14px;background:#555555;"></div>
<div style="position:absolute;left:46px;top:311px;width:1px;height:14px;background:#555555;"></div>
<div style="position:absolute;left:229px;top:311px;width:1px;height:14px;background:#555555;"></div>
<div style="position:absolute;left:285px;top:311px;width:1px;height:14px;background:#555555;"></div>
<div style="position:absolute;left:345px;top:311px;width:1px;height:14px;background:#555555;"></div>
<div style="position:absolute;left:425px;top:311px;width:1px;height:14px;background:#555555;"></div>
<div style="position:absolute;left:892px;top:311px;width:1px;height:14px;background:#555555;"></div>
<div style="position:absolute;left:46px;top:324px;width:1px;height:77px;background:#555555;"></div>
<div style="position:absolute;left:229px;top:324px;width:1px;height:77px;background:#555555;"></div>
<div style="position:absolute;left:285px;top:324px;width:1px;height:77px;background:#555555;"></div>
<div style="position:absolute;left:345px;top:324px;width:1px;height:77px;background:#555555;"></div>
<div style="position:absolute;left:425px;top:324px;width:1px;height:77px;background:#555555;"></div>
<div style="position:absolute;left:892px;top:324px;width:1px;height:77px;background:#555555;"></div>
<div style="position:absolute;left:46px;top:400px;width:1px;height:15px;background:#555555;"></div>
<div style="position:absolute;left:229px;top:400px;width:1px;height:15px;background:#555555;"></div>
<div style="position:absolute;left:285px;top:400px;width:1px;height:15px;background:#555555;"></div>
<div style="position:absolute;left:345px;top:400px;width:1px;height:15px;background:#555555;"></div>
<div style="position:absolute;left:425px;top:400px;width:1px;height:15px;background:#555555;"></div>
<div style="position:absolute;left:892px;top:400px;width:1px;height:15px;background:#555555;"></div>
<div style="position:absolute;left:46px;top:414px;width:1px;height:14px;background:#555555;"></div>
<div style="position:absolute;left:229px;top:414px;width:1px;height:14px;background:#555555;"></div>
<div style="position:absolute;left:285px;top:414px;width:1px;height:14px;background:#555555;"></div>
<div style="position:absolute;left:345px;top:414px;width:1px;height:14px;background:#555555;"></div>
<div style="position:absolute;left:425px;top:414px;width:1px;height:14px;background:#555555;"></div>
<div style="position:absolute;left:892px;top:414px;width:1px;height:14px;background:#555555;"></div>
<div style="position:absolute;left:46px;top:427px;width:1px;height:14px;background:#555555;"></div>
<div style="position:absolute;left:229px;top:427px;width:1px;height:14px;background:#555555;"></div>
<div style="position:absolute;left:285px;top:427px;width:1px;height:14px;background:#555555;"></div>
<div style="position:absolute;left:345px;top:427px;width:1px;height:14px;background:#555555;"></div>
<div style="position:absolute;left:425px;top:427px;width:1px;height:14px;background:#555555;"></div>
<div style="position:absolute;left:892px;top:427px;width:1px;height:14px;background:#555555;"></div>
<div style="position:absolute;left:46px;top:440px;width:1px;height:15px;background:#555555;"></div>
<div style="position:absolute;left:229px;top:440px;width:1px;height:15px;background:#555555;"></div>
<div style="position:absolute;left:285px;top:440px;width:1px;height:15px;background:#555555;"></div>
<div style="position:absolute;left:345px;top:440px;width:1px;height:15px;background:#555555;"></div>
<div style="position:absolute;left:425px;top:440px;width:1px;height:15px;background:#555555;"></div>
<div style="position:absolute;left:892px;top:440px;width:1px;height:15px;background:#555555;"></div>
<div style="position:absolute;left:46px;top:454px;width:1px;height:15px;background:#555555;"></div>
<div style="position:absolute;left:229px;top:454px;width:1px;height:15px;background:#555555;"></div>
<div style="position:absolute;left:285px;top:454px;width:1px;height:15px;background:#555555;"></div>
<div style="position:absolute;left:345px;top:454px;width:1px;height:15px;background:#555555;"></div>
<div style="position:absolute;left:425px;top:454px;width:1px;height:15px;background:#555555;"></div>
<div style="position:absolute;left:892px;top:454px;width:1px;height:15px;background:#555555;"></div>
<div style="position:absolute;left:46px;top:468px;width:1px;height:14px;background:#555555;"></div>
<div style="position:absolute;left:229px;top:468px;width:1px;height:14px;background:#555555;"></div>
<div style="position:absolute;left:285px;top:468px;width:1px;height:14px;background:#555555;"></div>
<div style="position:absolute;left:345px;top:468px;width:1px;height:14px;background:#555555;"></div>
<div style="position:absolute;left:425px;top:468px;width:1px;height:14px;background:#555555;"></div>
<div style="position:absolute;left:892px;top:468px;width:1px;height:14px;background:#555555;"></div>
<div style="position:absolute;left:46px;top:481px;width:1px;height:22px;background:#555555;"></div>
<div style="position:absolute;left:46px;top:502px;width:1px;height:14px;background:#555555;"></div>
<div style="position:absolute;left:892px;top:502px;width:1px;height:14px;background:#555555;"></div>
<div style="position:absolute;left:46px;top:503px;width:184px;height:1px;background:#555555;"></div>
<div style="position:absolute;left:46px;top:516px;width:184px;height:1px;background:#555555;"></div>
<div style="position:absolute;left:229px;top:502px;width:1px;height:14px;background:#555555;"></div>
<div style="position:absolute;left:285px;top:502px;width:1px;height:14px;background:#555555;"></div>
<div style="position:absolute;left:285px;top:503px;width:61px;height:1px;background:#555555;"></div>
<div style="position:absolute;left:285px;top:516px;width:61px;height:1px;background:#555555;"></div>
<div style="position:absolute;left:345px;top:502px;width:1px;height:14px;background:#555555;"></div>
<div style="position:absolute;left:425px;top:502px;width:1px;height:14px;background:#555555;"></div>
<div style="position:absolute;left:345px;top:503px;width:81px;height:1px;background:#555555;"></div>
<div style="position:absolute;left:425px;top:503px;width:468px;height:1px;background:#555555;"></div>
<div style="position:absolute;left:46px;top:515px;width:1px;height:14px;background:#555555;"></div>
<div style="position:absolute;left:892px;top:515px;width:1px;height:14px;background:#555555;"></div>
<div style="position:absolute;left:46px;top:516px;width:184px;height:1px;background:#555555;"></div>
<div style="position:absolute;left:46px;top:529px;width:184px;height:1px;background:#555555;"></div>
<div style="position:absolute;left:229px;top:515px;width:1px;height:14px;background:#555555;"></div>
<div style="position:absolute;left:285px;top:515px;width:1px;height:14px;background:#555555;"></div>
<div style="position:absolute;left:285px;top:516px;width:61px;height:1px;background:#555555;"></div>
<div style="position:absolute;left:285px;top:529px;width:61px;height:1px;background:#555555;"></div>
<div style="position:absolute;left:345px;top:515px;width:1px;height:14px;background:#555555;"></div>
<div style="position:absolute;left:425px;top:515px;width:1px;height:14px;background:#555555;"></div>
<div style="position:absolute;left:425px;top:516px;width:468px;height:1px;background:#555555;"></div>
<div style="position:absolute;left:46px;top:528px;width:1px;height:24px;background:#555555;"></div>
<div style="position:absolute;left:892px;top:528px;width:1px;height:24px;background:#555555;"></div>
<div style="position:absolute;left:46px;top:529px;width:184px;height:1px;background:#555555;"></div>
<div style="position:absolute;left:46px;top:552px;width:184px;height:1px;background:#555555;"></div>
<div style="position:absolute;left:229px;top:528px;width:1px;height:24px;background:#555555;"></div>
<div style="position:absolute;left:285px;top:528px;width:1px;height:24px;background:#555555;"></div>
<div style="position:absolute;left:285px;top:529px;width:61px;height:1px;background:#555555;"></div>
<div style="position:absolute;left:285px;top:552px;width:61px;height:1px;background:#555555;"></div>
<div style="position:absolute;left:345px;top:528px;width:1px;height:24px;background:#555555;"></div>
<div style="position:absolute;left:425px;top:528px;width:1px;height:24px;background:#555555;"></div>
<div style="position:absolute;left:46px;top:551px;width:1px;height:14px;background:#555555;"></div>
<div style="position:absolute;left:892px;top:551px;width:1px;height:14px;background:#555555;"></div>
<div style="position:absolute;left:46px;top:552px;width:184px;height:1px;background:#555555;"></div>
<div style="position:absolute;left:46px;top:565px;width:184px;height:1px;background:#555555;"></div>
<div style="position:absolute;left:229px;top:551px;width:1px;height:14px;background:#555555;"></div>
<div style="position:absolute;left:285px;top:551px;width:1px;height:14px;background:#555555;"></div>
<div style="position:absolute;left:285px;top:552px;width:61px;height:1px;background:#555555;"></div>
<div style="position:absolute;left:285px;top:565px;width:61px;height:1px;background:#555555;"></div>
<div style="position:absolute;left:345px;top:551px;width:1px;height:14px;background:#555555;"></div>
<div style="position:absolute;left:425px;top:551px;width:1px;height:14px;background:#555555;"></div>
<div style="position:absolute;left:46px;top:564px;width:1px;height:24px;background:#555555;"></div>
<div style="position:absolute;left:892px;top:564px;width:1px;height:24px;background:#555555;"></div>
<div style="position:absolute;left:46px;top:565px;width:184px;height:1px;background:#555555;"></div>
<div style="position:absolute;left:46px;top:588px;width:184px;height:1px;background:#555555;"></div>
<div style="position:absolute;left:229px;top:564px;width:1px;height:24px;background:#555555;"></div>
<div style="position:absolute;left:285px;top:564px;width:1px;height:24px;background:#555555;"></div>
<div style="position:absolute;left:285px;top:565px;width:61px;height:1px;background:#555555;"></div>
<div style="position:absolute;left:285px;top:588px;width:61px;height:1px;background:#555555;"></div>
<div style="position:absolute;left:345px;top:564px;width:1px;height:24px;background:#555555;"></div>
<div style="position:absolute;left:425px;top:564px;width:1px;height:24px;background:#555555;"></div>
<div style="position:absolute;left:46px;top:587px;width:1px;height:14px;background:#555555;"></div>
<div style="position:absolute;left:892px;top:587px;width:1px;height:14px;background:#555555;"></div>
<div style="position:absolute;left:46px;top:588px;width:184px;height:1px;background:#555555;"></div>
<div style="position:absolute;left:46px;top:601px;width:184px;height:1px;background:#555555;"></div>
<div style="position:absolute;left:229px;top:587px;width:1px;height:14px;background:#555555;"></div>
<div style="position:absolute;left:285px;top:587px;width:1px;height:14px;background:#555555;"></div>
<div style="position:absolute;left:285px;top:588px;width:61px;height:1px;background:#555555;"></div>
<div style="position:absolute;left:285px;top:601px;width:61px;height:1px;background:#555555;"></div>
<div style="position:absolute;left:345px;top:587px;width:1px;height:14px;background:#555555;"></div>
<div style="position:absolute;left:425px;top:587px;width:1px;height:14px;background:#555555;"></div>
<div style="position:absolute;left:46px;top:600px;width:1px;height:25px;background:#555555;"></div>
<div style="position:absolute;left:892px;top:600px;width:1px;height:25px;background:#555555;"></div>
<div style="position:absolute;left:46px;top:601px;width:184px;height:1px;background:#555555;"></div>
<div style="position:absolute;left:46px;top:625px;width:184px;height:1px;background:#555555;"></div>
<div style="position:absolute;left:229px;top:600px;width:1px;height:25px;background:#555555;"></div>
<div style="position:absolute;left:285px;top:600px;width:1px;height:25px;background:#555555;"></div>
<div style="position:absolute;left:285px;top:601px;width:61px;height:1px;background:#555555;"></div>
<div style="position:absolute;left:285px;top:625px;width:61px;height:1px;background:#555555;"></div>
<div style="position:absolute;left:345px;top:600px;width:1px;height:25px;background:#555555;"></div>
<div style="position:absolute;left:425px;top:600px;width:1px;height:25px;background:#555555;"></div>
<div style="position:absolute;left:46px;top:624px;width:1px;height:14px;background:#555555;"></div>
<div style="position:absolute;left:892px;top:624px;width:1px;height:14px;background:#555555;"></div>
<div style="position:absolute;left:46px;top:625px;width:184px;height:1px;background:#555555;"></div>
<div style="position:absolute;left:46px;top:638px;width:184px;height:1px;background:#555555;"></div>
<div style="position:absolute;left:229px;top:624px;width:1px;height:14px;background:#555555;"></div>
<div style="position:absolute;left:285px;top:624px;width:1px;height:14px;background:#555555;"></div>
<div style="position:absolute;left:285px;top:625px;width:61px;height:1px;background:#555555;"></div>
<div style="position:absolute;left:285px;top:638px;width:61px;height:1px;background:#555555;"></div>
<div style="position:absolute;left:345px;top:624px;width:1px;height:14px;background:#555555;"></div>
<div style="position:absolute;left:425px;top:624px;width:1px;height:14px;background:#555555;"></div>
<div style="position:absolute;left:46px;top:637px;width:1px;height:14px;background:#555555;"></div>
<div style="position:absolute;left:892px;top:637px;width:1px;height:14px;background:#555555;"></div>
<div style="position:absolute;left:46px;top:638px;width:184px;height:1px;background:#555555;"></div>
<div style="position:absolute;left:46px;top:651px;width:184px;height:1px;background:#555555;"></div>
<div style="position:absolute;left:229px;top:637px;width:1px;height:14px;background:#555555;"></div>
<div style="position:absolute;left:285px;top:637px;width:1px;height:14px;background:#555555;"></div>
<div style="position:absolute;left:285px;top:638px;width:61px;height:1px;background:#555555;"></div>
<div style="position:absolute;left:285px;top:651px;width:61px;height:1px;background:#555555;"></div>
<div style="position:absolute;left:345px;top:637px;width:1px;height:14px;background:#555555;"></div>
<div style="position:absolute;left:425px;top:637px;width:1px;height:14px;background:#555555;"></div>
<div style="position:absolute;left:46px;top:650px;width:1px;height:15px;background:#555555;"></div>
<div style="position:absolute;left:892px;top:650px;width:1px;height:15px;background:#555555;"></div>
<div style="position:absolute;left:46px;top:651px;width:184px;height:1px;background:#555555;"></div>
<div style="position:absolute;left:46px;top:665px;width:184px;height:1px;background:#555555;"></div>
<div style="position:absolute;left:229px;top:650px;width:1px;height:15px;background:#555555;"></div>
<div style="position:absolute;left:285px;top:650px;width:1px;height:15px;background:#555555;"></div>
<div style="position:absolute;left:285px;top:651px;width:61px;height:1px;background:#555555;"></div>
<div style="position:absolute;left:285px;top:665px;width:61px;height:1px;background:#555555;"></div>
<div style="position:absolute;left:345px;top:650px;width:1px;height:15px;background:#555555;"></div>
<div style="position:absolute;left:425px;top:650px;width:1px;height:15px;background:#555555;"></div>
<div style="position:absolute;left:46px;top:664px;width:1px;height:13px;background:#555555;"></div>
<div style="position:absolute;left:892px;top:664px;width:1px;height:13px;background:#555555;"></div>
<div style="position:absolute;left:46px;top:665px;width:184px;height:1px;background:#555555;"></div>
<div style="position:absolute;left:46px;top:677px;width:184px;height:1px;background:#555555;"></div>
<div style="position:absolute;left:229px;top:664px;width:1px;height:13px;background:#555555;"></div>
<div style="position:absolute;left:285px;top:664px;width:1px;height:13px;background:#555555;"></div>
<div style="position:absolute;left:285px;top:665px;width:61px;height:1px;background:#555555;"></div>
<div style="position:absolute;left:285px;top:677px;width:61px;height:1px;background:#555555;"></div>
<div style="position:absolute;left:345px;top:664px;width:1px;height:13px;background:#555555;"></div>
<div style="position:absolute;left:425px;top:664px;width:1px;height:13px;background:#555555;"></div>
<div style="position:absolute;left:46px;top:676px;width:1px;height:14px;background:#555555;"></div>
<div style="position:absolute;left:892px;top:676px;width:1px;height:14px;background:#555555;"></div>
<div style="position:absolute;left:46px;top:677px;width:184px;height:1px;background:#555555;"></div>
<div style="position:absolute;left:46px;top:690px;width:184px;height:1px;background:#555555;"></div>
<div style="position:absolute;left:229px;top:676px;width:1px;height:14px;background:#555555;"></div>
<div style="position:absolute;left:285px;top:676px;width:1px;height:14px;background:#555555;"></div>
<div style="position:absolute;left:285px;top:677px;width:61px;height:1px;background:#555555;"></div>
<div style="position:absolute;left:285px;top:690px;width:61px;height:1px;background:#555555;"></div>
<div style="position:absolute;left:345px;top:676px;width:1px;height:14px;background:#555555;"></div>
<div style="position:absolute;left:425px;top:676px;width:1px;height:14px;background:#555555;"></div>
<div style="position:absolute;left:46px;top:689px;width:1px;height:14px;background:#555555;"></div>
<div style="position:absolute;left:892px;top:689px;width:1px;height:14px;background:#555555;"></div>
<div style="position:absolute;left:46px;top:690px;width:184px;height:1px;background:#555555;"></div>
<div style="position:absolute;left:46px;top:703px;width:184px;height:1px;background:#555555;"></div>
<div style="position:absolute;left:229px;top:689px;width:1px;height:14px;background:#555555;"></div>
<div style="position:absolute;left:229px;top:690px;width:57px;height:1px;background:#555555;"></div>
<div style="position:absolute;left:285px;top:689px;width:1px;height:14px;background:#555555;"></div>
<div style="position:absolute;left:285px;top:690px;width:61px;height:1px;background:#555555;"></div>
<div style="position:absolute;left:285px;top:703px;width:61px;height:1px;background:#555555;"></div>
<div style="position:absolute;left:345px;top:689px;width:1px;height:14px;background:#555555;"></div>
<div style="position:absolute;left:425px;top:689px;width:1px;height:14px;background:#555555;"></div>
<div style="position:absolute;left:345px;top:690px;width:81px;height:1px;background:#555555;"></div>
<div style="position:absolute;left:425px;top:690px;width:468px;height:1px;background:#555555;"></div>
<div style="position:absolute;left:46px;top:702px;width:1px;height:14px;background:#555555;"></div>
<div style="position:absolute;left:892px;top:702px;width:1px;height:14px;background:#555555;"></div>
<div style="position:absolute;left:46px;top:703px;width:184px;height:1px;background:#555555;"></div>
<div style="position:absolute;left:46px;top:716px;width:184px;height:1px;background:#555555;"></div>
<div style="position:absolute;left:229px;top:702px;width:1px;height:14px;background:#555555;"></div>
<div style="position:absolute;left:229px;top:703px;width:57px;height:1px;background:#555555;"></div>
<div style="position:absolute;left:285px;top:702px;width:1px;height:14px;background:#555555;"></div>
<div style="position:absolute;left:285px;top:703px;width:61px;height:1px;background:#555555;"></div>
<div style="position:absolute;left:285px;top:716px;width:61px;height:1px;background:#555555;"></div>
<div style="position:absolute;left:345px;top:702px;width:1px;height:14px;background:#555555;"></div>
<div style="position:absolute;left:425px;top:702px;width:1px;height:14px;background:#555555;"></div>
<div style="position:absolute;left:345px;top:703px;width:81px;height:1px;background:#555555;"></div>
<div style="position:absolute;left:425px;top:703px;width:468px;height:1px;background:#555555;"></div>
<div style="position:absolute;left:46px;top:715px;width:1px;height:14px;background:#555555;"></div>
<div style="position:absolute;left:892px;top:715px;width:1px;height:14px;background:#555555;"></div>
<div style="position:absolute;left:46px;top:716px;width:184px;height:1px;background:#555555;"></div>
<div style="position:absolute;left:46px;top:729px;width:184px;height:1px;background:#555555;"></div>
<div style="position:absolute;left:229px;top:715px;width:1px;height:14px;background:#555555;"></div>
<div style="position:absolute;left:229px;top:716px;width:57px;height:1px;background:#555555;"></div>
<div style="position:absolute;left:285px;top:715px;width:1px;height:14px;background:#555555;"></div>
<div style="position:absolute;left:285px;top:716px;width:61px;height:1px;background:#555555;"></div>
<div style="position:absolute;left:285px;top:729px;width:61px;height:1px;background:#555555;"></div>
<div style="position:absolute;left:345px;top:715px;width:1px;height:14px;background:#555555;"></div>
<div style="position:absolute;left:425px;top:715px;width:1px;height:14px;background:#555555;"></div>
<div style="position:absolute;left:345px;top:716px;width:81px;height:1px;background:#555555;"></div>
<div style="position:absolute;left:425px;top:716px;width:468px;height:1px;background:#555555;"></div>
<div style="position:absolute;left:46px;top:728px;width:1px;height:14px;background:#555555;"></div>
<div style="position:absolute;left:892px;top:728px;width:1px;height:14px;background:#555555;"></div>
<div style="position:absolute;left:46px;top:729px;width:184px;height:1px;background:#555555;"></div>
<div style="position:absolute;left:46px;top:742px;width:184px;height:1px;background:#555555;"></div>
<div style="position:absolute;left:229px;top:728px;width:1px;height:14px;background:#555555;"></div>
<div style="position:absolute;left:229px;top:729px;width:57px;height:1px;background:#555555;"></div>
<div style="position:absolute;left:285px;top:728px;width:1px;height:14px;background:#555555;"></div>
<div style="position:absolute;left:285px;top:729px;width:61px;height:1px;background:#555555;"></div>
<div style="position:absolute;left:285px;top:742px;width:61px;height:1px;background:#555555;"></div>
<div style="position:absolute;left:345px;top:728px;width:1px;height:14px;background:#555555;"></div>
<div style="position:absolute;left:425px;top:728px;width:1px;height:14px;background:#555555;"></div>
<div style="position:absolute;left:345px;top:729px;width:81px;height:1px;background:#555555;"></div>
<div style="position:absolute;left:425px;top:729px;width:468px;height:1px;background:#555555;"></div>
<div style="position:absolute;left:46px;top:741px;width:1px;height:13px;background:#555555;"></div>
<div style="position:absolute;left:892px;top:741px;width:1px;height:13px;background:#555555;"></div>
<div style="position:absolute;left:46px;top:742px;width:184px;height:1px;background:#555555;"></div>
<div style="position:absolute;left:46px;top:754px;width:184px;height:1px;background:#555555;"></div>
<div style="position:absolute;left:229px;top:741px;width:1px;height:13px;background:#555555;"></div>
<div style="position:absolute;left:229px;top:742px;width:57px;height:1px;background:#555555;"></div>
<div style="position:absolute;left:285px;top:741px;width:1px;height:13px;background:#555555;"></div>
<div style="position:absolute;left:285px;top:742px;width:61px;height:1px;background:#555555;"></div>
<div style="position:absolute;left:285px;top:754px;width:61px;height:1px;background:#555555;"></div>
<div style="position:absolute;left:345px;top:741px;width:1px;height:13px;background:#555555;"></div>
<div style="position:absolute;left:425px;top:741px;width:1px;height:13px;background:#555555;"></div>
<div style="position:absolute;left:345px;top:742px;width:81px;height:1px;background:#555555;"></div>
<div style="position:absolute;left:425px;top:742px;width:468px;height:1px;background:#555555;"></div>
<div style="position:absolute;left:46px;top:753px;width:1px;height:14px;background:#555555;"></div>
<div style="position:absolute;left:892px;top:753px;width:1px;height:14px;background:#555555;"></div>
<div style="position:absolute;left:46px;top:754px;width:184px;height:1px;background:#555555;"></div>
<div style="position:absolute;left:46px;top:767px;width:184px;height:1px;background:#555555;"></div>
<div style="position:absolute;left:229px;top:753px;width:1px;height:14px;background:#555555;"></div>
<div style="position:absolute;left:229px;top:754px;width:57px;height:1px;background:#555555;"></div>
<div style="position:absolute;left:285px;top:753px;width:1px;height:14px;background:#555555;"></div>
<div style="position:absolute;left:285px;top:754px;width:61px;height:1px;background:#555555;"></div>
<div style="position:absolute;left:285px;top:767px;width:61px;height:1px;background:#555555;"></div>
<div style="position:absolute;left:345px;top:753px;width:1px;height:14px;background:#555555;"></div>
<div style="position:absolute;left:425px;top:753px;width:1px;height:14px;background:#555555;"></div>
<div style="position:absolute;left:345px;top:754px;width:81px;height:1px;background:#555555;"></div>
<div style="position:absolute;left:425px;top:754px;width:468px;height:1px;background:#555555;"></div>
<div style="position:absolute;left:46px;top:766px;width:1px;height:14px;background:#555555;"></div>
<div style="position:absolute;left:892px;top:766px;width:1px;height:14px;background:#555555;"></div>
<div style="position:absolute;left:46px;top:767px;width:184px;height:1px;background:#555555;"></div>
<div style="position:absolute;left:46px;top:780px;width:184px;height:1px;background:#555555;"></div>
<div style="position:absolute;left:229px;top:766px;width:1px;height:14px;background:#555555;"></div>
<div style="position:absolute;left:229px;top:767px;width:57px;height:1px;background:#555555;"></div>
<div style="position:absolute;left:285px;top:766px;width:1px;height:14px;background:#555555;"></div>
<div style="position:absolute;left:285px;top:767px;width:61px;height:1px;background:#555555;"></div>
<div style="position:absolute;left:285px;top:780px;width:61px;height:1px;background:#555555;"></div>
<div style="position:absolute;left:345px;top:766px;width:1px;height:14px;background:#555555;"></div>
<div style="position:absolute;left:425px;top:766px;width:1px;height:14px;background:#555555;"></div>
<div style="position:absolute;left:345px;top:767px;width:81px;height:1px;background:#555555;"></div>
<div style="position:absolute;left:425px;top:767px;width:468px;height:1px;background:#555555;"></div>
<div style="position:absolute;left:46px;top:779px;width:1px;height:8px;background:#555555;"></div>
<div style="position:absolute;left:892px;top:779px;width:1px;height:8px;background:#555555;"></div>
<div style="position:absolute;left:46px;top:780px;width:184px;height:1px;background:#555555;"></div>
<div style="position:absolute;left:229px;top:779px;width:1px;height:8px;background:#555555;"></div>
<div style="position:absolute;left:229px;top:780px;width:57px;height:1px;background:#555555;"></div>
<div style="position:absolute;left:285px;top:779px;width:1px;height:8px;background:#555555;"></div>
<div style="position:absolute;left:285px;top:780px;width:61px;height:1px;background:#555555;"></div>
<div style="position:absolute;left:345px;top:779px;width:1px;height:8px;background:#555555;"></div>
<div style="position:absolute;left:425px;top:779px;width:1px;height:8px;background:#555555;"></div>
<div style="position:absolute;left:229px;top:690px;width:57px;height:1px;background:#555555;"></div>
<div style="position:absolute;left:345px;top:690px;width:81px;height:1px;background:#555555;"></div>
<div style="position:absolute;left:425px;top:690px;width:468px;height:1px;background:#555555;"></div>
<div class="t" style="left:51px;top:224px;width:173px;height:22px;justify-content:flex-start;align-items:center;font-size:18px;color:#2b511d;font-weight:500;padding-top:4px;-webkit-text-stroke:0.5px"><span>内容</span></div>
<div class="t" style="left:234px;top:224px;width:46px;height:22px;justify-content:flex-start;align-items:center;font-size:18px;color:#2b511d;font-weight:500;padding-top:4px;-webkit-text-stroke:0.5px"><span>品牌</span></div>
<div class="t" style="left:290px;top:224px;width:50px;height:22px;justify-content:flex-start;align-items:center;font-size:18px;color:#2b511d;font-weight:500;padding-top:4px;-webkit-text-stroke:0.5px"><span>位置</span></div>
<div class="t" style="left:348px;top:224px;width:74px;height:22px;justify-content:center;align-items:center;font-size:18px;color:#2b511d;font-weight:500;padding-top:4px;-webkit-text-stroke:0.5px"><span>金额</span></div>
<div class="t" style="left:429px;top:224px;width:459px;height:22px;justify-content:flex-start;align-items:center;font-size:18px;color:#2b511d;font-weight:500;padding-top:4px;-webkit-text-stroke:0.5px"><span>备注/联系人（尺寸）</span></div>
<div class="t" style="left:49px;top:247px;width:177px;height:12px;justify-content:flex-start;align-items:flex-end;font-size:10.5px;color:#3b3b3b;font-weight:normal;"><span>装修+设计费</span></div>
<div class="t" style="left:232px;top:247px;width:50px;height:12px;justify-content:flex-start;align-items:flex-end;font-size:10.5px;color:#3b3b3b;font-weight:normal;"><span>邓金牛</span></div>
<div class="t" style="left:348px;top:247px;width:74px;height:12px;justify-content:center;align-items:flex-end;font-size:10.5px;color:#3b3b3b;font-weight:normal;"><span><span style="letter-spacing:-0.45px">75000</span></span></div>
<div class="t" style="left:428px;top:247px;width:461px;height:12px;justify-content:flex-start;align-items:flex-end;font-size:10.5px;color:#3b3b3b;font-weight:normal;"><span><span style="letter-spacing:-0.45px">13794870789</span>，已经支付<span style="letter-spacing:-0.45px">39000</span></span></div>
<div class="t" style="left:49px;top:260px;width:177px;height:12px;justify-content:flex-start;align-items:flex-end;font-size:10.5px;color:#3b3b3b;font-weight:normal;"><span>瓷砖</span></div>
<div class="t" style="left:232px;top:260px;width:50px;height:12px;justify-content:flex-start;align-items:flex-end;font-size:10.5px;color:#3b3b3b;font-weight:normal;"><span>马可波罗</span></div>
<div class="t" style="left:288px;top:260px;width:54px;height:12px;justify-content:flex-start;align-items:flex-end;font-size:10.5px;color:#3b3b3b;font-weight:normal;"><span>卫生间</span></div>
<div class="t" style="left:428px;top:260px;width:461px;height:12px;justify-content:flex-start;align-items:flex-end;font-size:10.5px;color:#3b3b3b;font-weight:normal;"><span>凌莉宾 :<span style="letter-spacing:-0.45px">17709381910</span></span></div>
<div class="t" style="left:49px;top:273px;width:177px;height:12px;justify-content:flex-start;align-items:flex-end;font-size:10.5px;color:#3b3b3b;font-weight:normal;"><span>瓷砖</span></div>
<div class="t" style="left:232px;top:273px;width:50px;height:12px;justify-content:flex-start;align-items:flex-end;font-size:10.5px;color:#3b3b3b;font-weight:normal;"><span>马可波罗</span></div>
<div class="t" style="left:288px;top:273px;width:54px;height:12px;justify-content:flex-start;align-items:flex-end;font-size:10.5px;color:#3b3b3b;font-weight:normal;"><span>厨房阳台</span></div>
<div class="t" style="left:428px;top:273px;width:461px;height:12px;justify-content:flex-start;align-items:flex-end;font-size:10.5px;color:#3b3b3b;font-weight:normal;"><span><span style="letter-spacing:-0.45px">10000</span>(订金)+<span style="letter-spacing:-0.45px">13269</span>+<span style="letter-spacing:-0.45px">240</span>(上楼费)+<span style="letter-spacing:-0.45px">3031</span>(补货)+<span style="letter-spacing:-0.45px">35</span>（上楼费）</span></div>
<div class="t" style="left:49px;top:286px;width:177px;height:12px;justify-content:flex-start;align-items:flex-end;font-size:10.5px;color:#3b3b3b;font-weight:normal;"><span>地板</span></div>
<div class="t" style="left:232px;top:286px;width:50px;height:12px;justify-content:flex-start;align-items:flex-end;font-size:10.5px;color:#3b3b3b;font-weight:normal;"><span>大自然</span></div>
<div class="t" style="left:288px;top:286px;width:54px;height:12px;justify-content:flex-start;align-items:flex-end;font-size:10.5px;color:#3b3b3b;font-weight:normal;"><span>全屋</span></div>
<div class="t" style="left:348px;top:286px;width:74px;height:12px;justify-content:center;align-items:flex-end;font-size:10.5px;color:#3b3b3b;font-weight:normal;"><span><span style="letter-spacing:-0.45px">39365</span></span></div>
<div class="t" style="left:428px;top:286px;width:461px;height:12px;justify-content:flex-start;align-items:flex-end;font-size:10.5px;color:#3b3b3b;font-weight:normal;"><span><span style="letter-spacing:-0.45px">90</span>+<span style="letter-spacing:-0.45px">430</span>=<span style="letter-spacing:-0.45px">38700</span>，已经支付定金<span style="letter-spacing:-0.45px">2000.10</span>月<span style="letter-spacing:-0.45px">26</span>日<span style="color:#e0282e;font-weight:bold">支付<span style="letter-spacing:-0.45px">30000</span>，共支付<span style="letter-spacing:-0.45px">32000</span></span>，<span style="letter-spacing:-0.45px">12</span>月<span style="letter-spacing:-0.45px">3</span>日支付<span style="letter-spacing:-0.45px">7265</span>+<span style="letter-spacing:-0.45px">100</span></span></div>
<div class="t" style="left:49px;top:299px;width:177px;height:12px;justify-content:flex-start;align-items:flex-end;font-size:10.5px;color:#3b3b3b;font-weight:normal;"><span>门</span></div>
<div class="t" style="left:232px;top:299px;width:50px;height:12px;justify-content:flex-start;align-items:flex-end;font-size:10.5px;color:#3b3b3b;font-weight:normal;"><span><span style="letter-spacing:-0.45px">11</span>木门</span></div>
<div class="t" style="left:288px;top:299px;width:54px;height:12px;justify-content:flex-start;align-items:flex-end;font-size:10.5px;color:#3b3b3b;font-weight:normal;"><span>全屋</span></div>
<div class="t" style="left:348px;top:299px;width:74px;height:12px;justify-content:center;align-items:flex-end;font-size:10.5px;color:#3b3b3b;font-weight:normal;"><span><span style="letter-spacing:-0.45px">23275</span></span></div>
<div class="t" style="left:428px;top:299px;width:461px;height:12px;justify-content:flex-start;align-items:flex-end;font-size:10.5px;color:#3b3b3b;font-weight:normal;"><span><span style="letter-spacing:-0.45px">3</span>个房门+<span style="letter-spacing:-0.45px">2</span>个卫生间门+厨房门，已经支付<span style="letter-spacing:-0.45px">15275</span>，尾款<span style="color:#e0282e;font-weight:bold"><span style="letter-spacing:-0.45px">7000</span></span></span></div>
<div class="t" style="left:49px;top:312px;width:177px;height:12px;justify-content:flex-start;align-items:flex-end;font-size:10.5px;color:#3b3b3b;font-weight:normal;"><span>中央净水器系统</span></div>
<div class="t" style="left:232px;top:312px;width:50px;height:12px;justify-content:flex-start;align-items:flex-end;font-size:10.5px;color:#3b3b3b;font-weight:normal;"><span><span style="letter-spacing:-0.45px">3</span>M</span></div>
<div class="t" style="left:288px;top:312px;width:54px;height:12px;justify-content:flex-start;align-items:flex-end;font-size:10.5px;color:#3b3b3b;font-weight:normal;"><span>厨房</span></div>
<div class="t" style="left:348px;top:312px;width:74px;height:12px;justify-content:center;align-items:flex-end;font-size:10.5px;color:#3b3b3b;font-weight:normal;"><span><span style="letter-spacing:-0.45px">16800</span></span></div>
<div class="t" style="left:428px;top:312px;width:461px;height:12px;justify-content:flex-start;align-items:flex-end;font-size:10.5px;color:#3b3b3b;font-weight:normal;"><span>已经支付定金<span style="letter-spacing:-0.45px">5000</span>，尾款<span style="color:#e0282e;font-weight:bold"><span style="letter-spacing:-0.45px">11800</span></span>，支付<span style="color:#e0282e"><span style="letter-spacing:-0.45px">11800</span>，<span style="letter-spacing:-0.45px">12</span>月<span style="letter-spacing:-0.45px">3</span>日</span></span></div>
<div class="t" style="left:49px;top:325px;width:177px;height:75px;justify-content:flex-start;align-items:center;font-size:10.5px;color:#3b3b3b;font-weight:normal;"><span>壁挂炉/德国威能</span></div>
<div class="t" style="left:232px;top:325px;width:50px;height:75px;justify-content:flex-start;align-items:center;font-size:10.5px;color:#3b3b3b;font-weight:normal;"><span>威能</span></div>
<div class="t" style="left:288px;top:325px;width:54px;height:75px;justify-content:flex-start;align-items:center;font-size:10.5px;color:#3b3b3b;font-weight:normal;"><span>厨房</span></div>
<div class="t" style="left:348px;top:325px;width:74px;height:75px;justify-content:center;align-items:center;font-size:10.5px;color:#3b3b3b;font-weight:normal;"><span><span style="color:#e0282e;font-weight:bold"><span style="letter-spacing:-0.45px">15800</span></span></span></div>
<div class="t" style="left:49px;top:401px;width:177px;height:13px;justify-content:flex-start;align-items:flex-end;font-size:10.5px;color:#3b3b3b;font-weight:normal;"><span>墙布+电视墙</span></div>
<div class="t" style="left:232px;top:401px;width:50px;height:13px;justify-content:flex-start;align-items:flex-end;font-size:10.5px;color:#3b3b3b;font-weight:normal;"><span>凤凰</span></div>
<div class="t" style="left:288px;top:401px;width:54px;height:13px;justify-content:flex-start;align-items:flex-end;font-size:10.5px;color:#3b3b3b;font-weight:normal;"><span>全屋</span></div>
<div class="t" style="left:348px;top:401px;width:74px;height:13px;justify-content:center;align-items:flex-end;font-size:10.5px;color:#3b3b3b;font-weight:normal;"><span><span style="color:#e0282e;font-weight:bold"><span style="letter-spacing:-0.45px">31900</span></span></span></div>
<div class="t" style="left:428px;top:401px;width:461px;height:13px;justify-content:flex-start;align-items:flex-end;font-size:10.5px;color:#3b3b3b;font-weight:normal;"><span>约<span style="letter-spacing:-0.45px">3</span>万，支付<span style="letter-spacing:-0.45px">10000</span>定金，<span style="letter-spacing:-0.45px">11</span>月<span style="letter-spacing:-0.45px">10</span>日<span style="color:#e0282e;font-weight:bold">支付<span style="letter-spacing:-0.45px">20000</span>，共<span style="letter-spacing:-0.45px">30000</span>，</span><span style="letter-spacing:-0.45px">1900</span>安装费</span></div>
<div class="t" style="left:49px;top:415px;width:177px;height:12px;justify-content:flex-start;align-items:flex-end;font-size:10.5px;color:#3b3b3b;font-weight:normal;"><span>踢脚线</span></div>
<div class="t" style="left:288px;top:415px;width:54px;height:12px;justify-content:flex-start;align-items:flex-end;font-size:10.5px;color:#3b3b3b;font-weight:normal;"><span>全屋</span></div>
<div class="t" style="left:428px;top:415px;width:461px;height:12px;justify-content:flex-start;align-items:flex-end;font-size:10.5px;color:#3b3b3b;font-weight:normal;"><span>小邓采购</span></div>
<div class="t" style="left:49px;top:428px;width:177px;height:12px;justify-content:flex-start;align-items:flex-end;font-size:10.5px;color:#3b3b3b;font-weight:normal;"><span>石材</span></div>
<div class="t" style="left:348px;top:428px;width:74px;height:12px;justify-content:center;align-items:flex-end;font-size:10.5px;color:#3b3b3b;font-weight:normal;"><span><span style="letter-spacing:-0.45px">1480</span></span></div>
<div class="t" style="left:428px;top:428px;width:461px;height:12px;justify-content:flex-start;align-items:flex-end;font-size:10.5px;color:#3b3b3b;font-weight:normal;"><span>已经支付给小邓（<span style="letter-spacing:-0.45px">2019-9-8</span>）</span></div>
<div class="t" style="left:49px;top:441px;width:177px;height:13px;justify-content:flex-start;align-items:flex-end;font-size:10.5px;color:#3b3b3b;font-weight:normal;"><span>一个推拉地插</span></div>
<div class="t" style="left:348px;top:441px;width:74px;height:13px;justify-content:center;align-items:flex-end;font-size:10.5px;color:#3b3b3b;font-weight:normal;"><span><span style="letter-spacing:-0.45px">54</span></span></div>
<div class="t" style="left:428px;top:441px;width:461px;height:13px;justify-content:flex-start;align-items:flex-end;font-size:10.5px;color:#3b3b3b;font-weight:normal;"><span>已经支付给小邓跟地漏一起一共<span style="letter-spacing:-0.45px">1000</span></span></div>
<div class="t" style="left:49px;top:455px;width:177px;height:13px;justify-content:flex-start;align-items:flex-end;font-size:10.5px;color:#3b3b3b;font-weight:normal;"><span>插线板</span></div>
<div class="t" style="left:288px;top:455px;width:54px;height:13px;justify-content:flex-start;align-items:flex-end;font-size:10.5px;color:#3b3b3b;font-weight:normal;"><span>良信</span></div>
<div class="t" style="left:428px;top:455px;width:461px;height:13px;justify-content:flex-start;align-items:flex-end;font-size:10.5px;color:#3b3b3b;font-weight:normal;"><span>董津</span></div>
<div class="t" style="left:49px;top:503px;width:177px;height:12px;justify-content:flex-start;align-items:flex-end;font-size:10.5px;color:#3b3b3b;font-weight:normal;"><span>主卫洗手台(里）+龙头</span></div>
<div class="t" style="left:288px;top:503px;width:54px;height:12px;justify-content:flex-start;align-items:flex-end;font-size:10.5px;color:#3b3b3b;font-weight:normal;"><span>主卧</span></div>
<div class="t" style="left:428px;top:503px;width:461px;height:12px;justify-content:flex-start;align-items:flex-end;font-size:10.5px;color:#3b3b3b;font-weight:normal;"><span>联系人：王鹏 <span style="letter-spacing:-0.45px">13519081984</span></span></div>
<div class="t" style="left:49px;top:516px;width:177px;height:12px;justify-content:flex-start;align-items:flex-end;font-size:10.5px;color:#3b3b3b;font-weight:normal;"><span>主卫智能马桶(里)+喷枪</span></div>
<div class="t" style="left:288px;top:516px;width:54px;height:12px;justify-content:flex-start;align-items:flex-end;font-size:10.5px;color:#3b3b3b;font-weight:normal;"><span>主卧</span></div>
<div class="t" style="left:49px;top:529px;width:177px;height:22px;justify-content:flex-start;align-items:flex-end;font-size:10.5px;color:#3b3b3b;font-weight:normal;"><span>主卫浴缸</span></div>
<div class="t" style="left:288px;top:529px;width:54px;height:22px;justify-content:flex-start;align-items:flex-end;font-size:10.5px;color:#3b3b3b;font-weight:normal;"><span>主卧</span></div>
<div class="t" style="left:49px;top:552px;width:177px;height:12px;justify-content:flex-start;align-items:flex-end;font-size:10.5px;color:#3b3b3b;font-weight:normal;"><span>客卫花洒(外)</span></div>
<div class="t" style="left:288px;top:552px;width:54px;height:12px;justify-content:flex-start;align-items:flex-end;font-size:10.5px;color:#3b3b3b;font-weight:normal;"><span>客卫</span></div>
<div class="t" style="left:49px;top:565px;width:177px;height:22px;justify-content:flex-start;align-items:flex-end;font-size:10.5px;color:#3b3b3b;font-weight:normal;"><span>客卫洗手台(外)+龙头</span></div>
<div class="t" style="left:288px;top:565px;width:54px;height:22px;justify-content:flex-start;align-items:flex-end;font-size:10.5px;color:#3b3b3b;font-weight:normal;"><span>客卫</span></div>
<div class="t" style="left:49px;top:588px;width:177px;height:12px;justify-content:flex-start;align-items:flex-end;font-size:10.5px;color:#3b3b3b;font-weight:normal;"><span>客卫马桶(外)+喷枪</span></div>
<div class="t" style="left:288px;top:588px;width:54px;height:12px;justify-content:flex-start;align-items:flex-end;font-size:10.5px;color:#3b3b3b;font-weight:normal;"><span>客卫</span></div>
<div class="t" style="left:49px;top:601px;width:177px;height:23px;justify-content:flex-start;align-items:flex-end;font-size:10.5px;color:#3b3b3b;font-weight:normal;"><span>洗衣台(生活阳台)+龙头</span></div>
<div class="t" style="left:288px;top:601px;width:54px;height:23px;justify-content:flex-start;align-items:flex-end;font-size:10.5px;color:#3b3b3b;font-weight:normal;"><span>洗衣阳台</span></div>
<div class="t" style="left:49px;top:625px;width:177px;height:12px;justify-content:flex-start;align-items:flex-end;font-size:10.5px;color:#3b3b3b;font-weight:normal;"><span>洗手池(户外阳台)+龙头</span></div>
<div class="t" style="left:288px;top:625px;width:54px;height:12px;justify-content:flex-start;align-items:flex-end;font-size:10.5px;color:#3b3b3b;font-weight:normal;"><span>书房阳台</span></div>
<div class="t" style="left:49px;top:638px;width:177px;height:12px;justify-content:flex-start;align-items:flex-end;font-size:10.5px;color:#3b3b3b;font-weight:normal;"><span>智能晾衣架</span></div>
<div class="t" style="left:288px;top:638px;width:54px;height:12px;justify-content:flex-start;align-items:flex-end;font-size:10.5px;color:#3b3b3b;font-weight:normal;"><span>洗衣阳台</span></div>
<div class="t" style="left:49px;top:651px;width:177px;height:13px;justify-content:flex-start;align-items:flex-end;font-size:10.5px;color:#3b3b3b;font-weight:normal;"><span>下水<span style="letter-spacing:-0.45px">4</span>套</span></div>
<div class="t" style="left:49px;top:665px;width:177px;height:11px;justify-content:flex-start;align-items:flex-end;font-size:10.5px;color:#3b3b3b;font-weight:normal;"><span>角阀<span style="letter-spacing:-0.45px">10</span>个</span></div>
<div class="t" style="left:49px;top:677px;width:177px;height:12px;justify-content:flex-start;align-items:flex-end;font-size:10.5px;color:#3b3b3b;font-weight:normal;"><span>软管<span style="letter-spacing:-0.45px">2</span>条</span></div>
<div class="t" style="left:49px;top:690px;width:177px;height:12px;justify-content:flex-start;align-items:flex-end;font-size:10.5px;color:#3b3b3b;font-weight:normal;"><span>厨房水槽龙头抽拉</span></div>
<div class="t" style="left:232px;top:690px;width:50px;height:12px;justify-content:center;align-items:flex-end;font-size:10.5px;color:#3b3b3b;font-weight:normal;"><span>九牧</span></div>
<div class="t" style="left:288px;top:690px;width:54px;height:12px;justify-content:flex-start;align-items:flex-end;font-size:10.5px;color:#3b3b3b;font-weight:normal;"><span>厨房</span></div>
<div class="t" style="left:348px;top:690px;width:74px;height:12px;justify-content:center;align-items:flex-end;font-size:10.5px;color:#3b3b3b;font-weight:normal;"><span><span style="color:#e0282e;font-weight:bold"><span style="letter-spacing:-0.45px">449</span></span></span></div>
<div class="t" style="left:428px;top:690px;width:461px;height:12px;justify-content:flex-start;align-items:flex-end;font-size:10.5px;color:#3b3b3b;font-weight:normal;"><span>双<span style="letter-spacing:-0.45px">11</span></span></div>
<div class="t" style="left:49px;top:703px;width:177px;height:12px;justify-content:flex-start;align-items:flex-end;font-size:10.5px;color:#3b3b3b;font-weight:normal;"><span>地漏</span></div>
<div class="t" style="left:288px;top:703px;width:54px;height:12px;justify-content:flex-start;align-items:flex-end;font-size:10.5px;color:#3b3b3b;font-weight:normal;"><span><span style="letter-spacing:-0.45px">7</span>个潜水艇</span></div>
<div class="t" style="left:348px;top:703px;width:74px;height:12px;justify-content:center;align-items:flex-end;font-size:10.5px;color:#3b3b3b;font-weight:normal;"><span><span style="letter-spacing:-0.45px">946</span></span></div>
<div class="t" style="left:428px;top:703px;width:461px;height:12px;justify-content:flex-start;align-items:flex-end;font-size:10.5px;color:#3b3b3b;font-weight:normal;"><span>已经支付给小邓<span style="letter-spacing:-0.45px">1000</span>元，+<span style="letter-spacing:-0.45px">60</span>元地插（优惠一共<span style="letter-spacing:-0.45px">1000</span>）<span style="letter-spacing:-0.45px">2019-9-5</span></span></div>
<div class="t" style="left:49px;top:716px;width:177px;height:12px;justify-content:flex-start;align-items:flex-end;font-size:10.5px;color:#3b3b3b;font-weight:normal;"><span>卫生间毛巾暖气片(里)</span></div>
<div class="t" style="left:288px;top:716px;width:54px;height:12px;justify-content:flex-start;align-items:flex-end;font-size:10.5px;color:#3b3b3b;font-weight:normal;"><span>主卧卫生间</span></div>
<div class="t" style="left:428px;top:716px;width:461px;height:12px;justify-content:flex-start;align-items:flex-end;font-size:10.5px;color:#3b3b3b;font-weight:normal;"><span>网购</span></div>
<div class="t" style="left:49px;top:729px;width:177px;height:12px;justify-content:flex-start;align-items:flex-end;font-size:10.5px;color:#3b3b3b;font-weight:normal;"><span>洗澡间玻璃门（外）</span></div>
<div class="t" style="left:288px;top:729px;width:54px;height:12px;justify-content:flex-start;align-items:flex-end;font-size:10.5px;color:#3b3b3b;font-weight:normal;"><span>客卫</span></div>
<div class="t" style="left:348px;top:729px;width:74px;height:12px;justify-content:center;align-items:flex-end;font-size:10.5px;color:#3b3b3b;font-weight:normal;"><span><span style="letter-spacing:-0.45px">3800</span></span></div>
<div class="t" style="left:428px;top:729px;width:461px;height:12px;justify-content:flex-start;align-items:flex-end;font-size:10.5px;color:#3b3b3b;font-weight:normal;"><span>华艺：<span style="letter-spacing:-0.45px">3800</span> 已支付<span style="color:#e0282e;font-weight:bold"><span style="letter-spacing:-0.45px">3000</span></span>,尾款<span style="letter-spacing:-0.45px">800</span></span></div>
<div class="t" style="left:49px;top:742px;width:177px;height:11px;justify-content:flex-start;align-items:flex-end;font-size:10.5px;color:#3b3b3b;font-weight:normal;"><span>客卫外洗手台侧面柜</span></div>
<div class="t" style="left:288px;top:742px;width:54px;height:11px;justify-content:flex-start;align-items:flex-end;font-size:10.5px;color:#3b3b3b;font-weight:normal;"><span>客卫</span></div>
<div class="t" style="left:428px;top:742px;width:461px;height:11px;justify-content:flex-start;align-items:flex-end;font-size:10.5px;color:#3b3b3b;font-weight:normal;"><span>玛格全屋定制（下方）</span></div>
<div class="t" style="left:49px;top:754px;width:177px;height:12px;justify-content:flex-start;align-items:flex-end;font-size:10.5px;color:#3b3b3b;font-weight:normal;"><span>洗衣阳台封外窗</span></div>
<div class="t" style="left:288px;top:754px;width:54px;height:12px;justify-content:flex-start;align-items:flex-end;font-size:10.5px;color:#3b3b3b;font-weight:normal;"><span>洗衣阳台</span></div>
<div class="t" style="left:428px;top:754px;width:461px;height:12px;justify-content:flex-start;align-items:flex-end;font-size:10.5px;color:#3b3b3b;font-weight:normal;"><span>小邓设计</span></div>
<div class="t" style="left:49px;top:767px;width:177px;height:12px;justify-content:flex-start;align-items:flex-end;font-size:10.5px;color:#3b3b3b;font-weight:normal;"><span>暖风机+照明</span></div>
<div class="t" style="left:288px;top:767px;width:54px;height:12px;justify-content:flex-start;align-items:flex-end;font-size:10.5px;color:#3b3b3b;font-weight:normal;"><span>客卫</span></div>
<div class="t" style="left:49px;top:780px;width:177px;height:12px;justify-content:flex-start;align-items:flex-end;font-size:10.5px;color:#3b3b3b;font-weight:normal;"><span>暖风机+照明+洗手台照明</span></div>
<div class="t" style="left:288px;top:780px;width:54px;height:12px;justify-content:flex-start;align-items:flex-end;font-size:10.5px;color:#3b3b3b;font-weight:normal;"><span>主卫</span></div>
<div class="t" style="left:348px;top:260px;width:74px;height:25px;justify-content:center;align-items:center;font-size:10.5px;color:#3b3b3b;font-weight:normal;"><span><span style="color:#e0282e;font-weight:bold"><span style="letter-spacing:-0.45px">26575</span></span></span></div>
<div class="t" style="left:232px;top:503px;width:50px;height:186px;justify-content:center;align-items:center;font-size:10.5px;color:#3b3b3b;font-weight:normal;"><span>九牧</span></div>
<div class="t" style="left:348px;top:503px;width:74px;height:186px;justify-content:center;align-items:center;font-size:10.5px;color:#3b3b3b;font-weight:normal;"><span><span style="letter-spacing:-0.45px">34800</span></span></div>
<div class="t" style="left:348px;top:767px;width:74px;height:25px;justify-content:center;align-items:center;font-size:10.5px;color:#3b3b3b;font-weight:normal;padding-top:4px"><span><span style="color:#e0282e;font-weight:bold"><span style="letter-spacing:-0.45px">1628</span></span></span></div>
<div class="t" style="left:49px;top:484px;width:293px;height:18px;justify-content:center;align-items:flex-end;font-size:10.5px;color:#3b3b3b;font-weight:normal;"><span>卫生间/阳台</span></div>
<div class="s" style="left:427px;top:331px;font-size:10.5px;color:#3b3b3b;line-height:13px">陈丽娟 <span style="letter-spacing:-0.45px">15293851201</span><br><span style="letter-spacing:-0.45px">8</span>月<span style="letter-spacing:-0.45px">16</span>日已经支付定金<span style="letter-spacing:-0.45px">2000</span>，<span style="letter-spacing:-0.45px">8</span>月<span style="letter-spacing:-0.45px">31</span>日支付定金<span style="letter-spacing:-0.45px">8000</span>（兰天家电）<br>尾款<b><span style="letter-spacing:-0.45px">5800</span>安装调试完成后再支付</b><br>包安装和所有材料，<span style="letter-spacing:-0.45px">2019-10-30</span>支付<span style="letter-spacing:-0.45px">5800</span>尾款（尚未测试）<br>型号：TubroTECpro<span style="letter-spacing:-0.45px">24</span>kw</div>
<div class="s" style="left:427px;top:519px;font-size:10.5px;color:#3b3b3b;line-height:13px">支付定金<span style="letter-spacing:-0.45px">14800</span><br>余款<span style="letter-spacing:-0.45px">20000</span></div>
<div class="s" style="left:427px;top:775px;font-size:10.5px;color:#3b3b3b;line-height:13px">雷士/购物车<span style="letter-spacing:-0.45px">11.11</span></div>
<div style="left:344px;top:502px;width:82px;height:188px;border:1.5px solid #217346"></div>
<div style="position:absolute;left:423px;top:688px;width:5px;height:5px;background:#217346;border:1px solid #fff"></div>
<svg style="left:420px;top:260px" width="6" height="6" viewBox="0 0 6 6"><path d="M0 0 L6 0 L6 6Z" fill="#7a3fc0"/></svg>
<svg style="left:420px;top:286px" width="6" height="6" viewBox="0 0 6 6"><path d="M0 0 L6 0 L6 6Z" fill="#7a3fc0"/></svg>
<svg style="left:420px;top:325px" width="6" height="6" viewBox="0 0 6 6"><path d="M0 0 L6 0 L6 6Z" fill="#7a3fc0"/></svg>
<div style="position:absolute;left:914px;top:529px;width:62px;height:23px;background:#a9d08e;border:1px solid #4a5a40"></div>
<div class="t" style="left:920px;top:531px;width:55px;height:22px;justify-content:flex-start;align-items:center;font-size:17px;color:#2b511d;font-weight:500;-webkit-text-stroke:0.4px"><span>预算</span></div>
<div class="t" style="left:979px;top:531px;width:100px;height:22px;justify-content:flex-start;align-items:center;font-size:17px;color:#4a4a4a;font-weight:normal;"><span>400000</span></div>
<div style="position:absolute;left:914px;top:565px;width:62px;height:23px;background:#a9d08e;border:1px solid #4a5a40"></div>
<div class="t" style="left:920px;top:567px;width:55px;height:22px;justify-content:flex-start;align-items:center;font-size:17px;color:#2b511d;font-weight:500;-webkit-text-stroke:0.4px"><span>已用</span></div>
<div class="t" style="left:979px;top:567px;width:100px;height:22px;justify-content:flex-start;align-items:center;font-size:17px;color:#4a4a4a;font-weight:normal;"><span>366794.7</span></div>
<div style="position:absolute;left:914px;top:601px;width:62px;height:24px;background:#a9d08e;border:1px solid #4a5a40"></div>
<div class="t" style="left:920px;top:603px;width:55px;height:23px;justify-content:flex-start;align-items:center;font-size:17px;color:#2b511d;font-weight:500;-webkit-text-stroke:0.4px"><span>剩余</span></div>
<div class="t" style="left:979px;top:603px;width:100px;height:23px;justify-content:flex-start;align-items:center;font-size:17px;color:#4a4a4a;font-weight:normal;"><span>33205.3</span></div>
<div style="position:absolute;left:0px;top:787px;width:1080px;height:24px;background:#e6e6e6;"></div>
<div style="position:absolute;left:0px;top:787px;width:1080px;height:1px;background:#c6c6c6;"></div>
<svg style="left:22px;top:794px" width="6" height="9" viewBox="0 0 6 9"><path d="M5 0.5 L0.5 4.5 L5 8.5Z" fill="#bbb"/></svg>
<svg style="left:46px;top:794px" width="6" height="9" viewBox="0 0 6 9"><path d="M1 0.5 L5.5 4.5 L1 8.5Z" fill="#bbb"/></svg>
<div style="position:absolute;left:84px;top:792px;width:1px;height:15px;background:#bdbdbd;"></div>
<div class="t" style="left:84px;top:786px;width:66px;height:22px;justify-content:center;align-items:center;font-size:15px;color:#555;font-weight:normal;"><span>Sheet1</span></div>
<div style="position:absolute;left:150px;top:792px;width:1px;height:15px;background:#bdbdbd;"></div>
<div class="t" style="left:150px;top:786px;width:66px;height:22px;justify-content:center;align-items:center;font-size:15px;color:#555;font-weight:normal;"><span>Sheet2</span></div>
<div style="position:absolute;left:216px;top:792px;width:1px;height:15px;background:#bdbdbd;"></div>
<div class="t" style="left:216px;top:786px;width:66px;height:22px;justify-content:center;align-items:center;font-size:15px;color:#555;font-weight:normal;"><span>Sheet3</span></div>
<div style="position:absolute;left:282px;top:792px;width:1px;height:15px;background:#bdbdbd;"></div>
<div class="t" style="left:282px;top:786px;width:66px;height:22px;justify-content:center;align-items:center;font-size:15px;color:#555;font-weight:normal;"><span>Sheet7</span></div>
<div style="position:absolute;left:348px;top:792px;width:1px;height:15px;background:#bdbdbd;"></div>
<div class="t" style="left:348px;top:786px;width:66px;height:22px;justify-content:center;align-items:center;font-size:15px;color:#555;font-weight:normal;"><span>Sheet4</span></div>
<div style="position:absolute;left:414px;top:792px;width:1px;height:15px;background:#bdbdbd;"></div>
<div class="t" style="left:414px;top:786px;width:68px;height:22px;justify-content:center;align-items:center;font-size:15px;color:#555;font-weight:normal;"><span>Sheet5</span></div>
<div style="position:absolute;left:482px;top:787px;width:66px;height:24px;background:#f7f7f7;"></div>
<div style="position:absolute;left:482px;top:807px;width:66px;height:2px;background:#217346;"></div>
<div class="t" style="left:482px;top:786px;width:66px;height:21px;justify-content:center;align-items:center;font-size:15px;color:#217346;font-weight:normal;"><span>Sheet6</span></div>
<svg style="left:572px;top:789px" width="20" height="20" viewBox="0 0 20 20"><circle cx="10" cy="10" r="8" fill="none" stroke="#777" stroke-width="1.2"/><path d="M10 5.5 L10 14.5 M5.5 10 L14.5 10" stroke="#777" stroke-width="1.3"/></svg>
<div style="left:930px;top:793px;width:2px;height:2px;background:#aaa"></div>
<div style="left:930px;top:797px;width:2px;height:2px;background:#aaa"></div>
<div style="left:930px;top:801px;width:2px;height:2px;background:#aaa"></div>
<div style="position:absolute;left:944px;top:792px;width:136px;height:15px;background:#fff;border:1px solid #c6c6c6;border-right:none"></div>
<div style="position:absolute;left:960px;top:792px;width:1px;height:15px;background:#c6c6c6;"></div>
<svg style="left:949px;top:795px" width="5" height="8" viewBox="0 0 5 8"><path d="M4.5 0.5 L0.5 4 L4.5 7.5Z" fill="#555"/></svg>
<div style="position:absolute;left:0px;top:811px;width:1080px;height:18px;background:#f3f2f1;"></div>
<div style="position:absolute;left:0px;top:811px;width:1080px;height:1px;background:#dadada;"></div>
<svg style="left:9px;top:814px" width="13" height="13" viewBox="0 0 13 13"><rect x="1" y="1" width="11" height="11" fill="none" stroke="#555" stroke-width="1"/><rect x="1" y="1" width="11" height="3" fill="#555"/><path d="M1 7 L12 7 M1 9.5 L12 9.5 M4.5 4 L4.5 12 M8 4 L8 12" stroke="#555" stroke-width="0.8"/></svg>
</body></html>
